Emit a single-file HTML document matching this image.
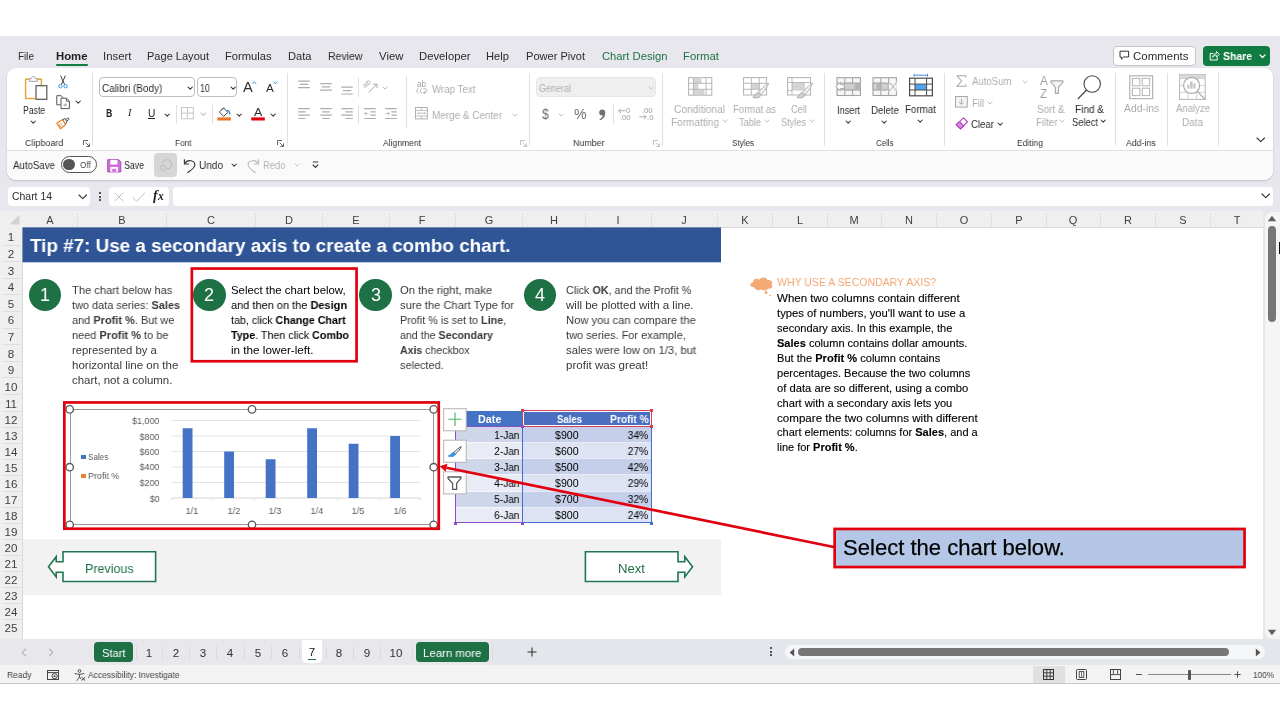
<!DOCTYPE html><html><head><meta charset="utf-8"><title>Excel</title><style>
html,body{margin:0;padding:0;}
body{width:1280px;height:720px;overflow:hidden;background:#fff;position:relative;font-family:"Liberation Sans",sans-serif;}
.a{position:absolute;}
.t{white-space:nowrap;line-height:1;will-change:transform;}
svg{overflow:visible;}
</style></head><body>
<div class="a" style="left:0px;top:36px;width:1280px;height:648px;background:#e7e7ed;"></div>
<div class="a" style="left:7px;top:68px;width:1266px;height:112px;background:#fff;border-radius:9px;box-shadow:0 1px 2px rgba(0,0,0,.18);"></div>
<div class="a" style="left:7px;top:150px;width:1266px;height:30px;background:#fafafa;border-radius:0 0 9px 9px;border-top:1px solid #e1e1e1;box-sizing:border-box;"></div>
<div class="a t" style="transform:scaleX(0.9110);top:51.00px;font-size:10.9px;color:#2b2b2b;left:18.00px;transform-origin:0 50%;">File</div>
<div class="a t" style="transform:scaleX(1.0408);top:51.00px;font-size:10.9px;color:#1f1f1f;font-weight:bold;left:56.00px;transform-origin:0 50%;">Home</div>
<div class="a t" style="transform:scaleX(1.0459);top:51.00px;font-size:10.9px;color:#2b2b2b;left:102.50px;transform-origin:0 50%;">Insert</div>
<div class="a t" style="transform:scaleX(1.0135);top:51.00px;font-size:10.9px;color:#2b2b2b;left:147.00px;transform-origin:0 50%;">Page Layout</div>
<div class="a t" style="transform:scaleX(1.0244);top:51.00px;font-size:10.9px;color:#2b2b2b;left:225.00px;transform-origin:0 50%;">Formulas</div>
<div class="a t" style="transform:scaleX(1.0210);top:51.00px;font-size:10.9px;color:#2b2b2b;left:287.50px;transform-origin:0 50%;">Data</div>
<div class="a t" style="transform:scaleX(0.9659);top:51.00px;font-size:10.9px;color:#2b2b2b;left:327.50px;transform-origin:0 50%;">Review</div>
<div class="a t" style="transform:scaleX(1.0460);top:51.00px;font-size:10.9px;color:#2b2b2b;left:378.50px;transform-origin:0 50%;">View</div>
<div class="a t" style="transform:scaleX(1.0371);top:51.00px;font-size:10.9px;color:#2b2b2b;left:418.50px;transform-origin:0 50%;">Developer</div>
<div class="a t" style="transform:scaleX(1.0265);top:51.00px;font-size:10.9px;color:#2b2b2b;left:486.00px;transform-origin:0 50%;">Help</div>
<div class="a t" style="transform:scaleX(1.0153);top:51.00px;font-size:10.9px;color:#2b2b2b;left:526.00px;transform-origin:0 50%;">Power Pivot</div>
<div class="a t" style="transform:scaleX(1.0305);top:51.00px;font-size:10.9px;color:#1e7145;left:601.50px;transform-origin:0 50%;">Chart Design</div>
<div class="a t" style="transform:scaleX(1.0435);top:51.00px;font-size:10.9px;color:#1e7145;left:682.50px;transform-origin:0 50%;">Format</div>
<div class="a" style="left:56px;top:64px;width:32px;height:2px;background:#107c41;border-radius:1px;"></div>
<div class="a" style="left:1112.5px;top:45.5px;width:83px;height:20px;background:#fff;border:1px solid #c4c4c4;box-sizing:border-box;border-radius:4px;"></div>
<svg class="a" style="left:1119px;top:50px;" width="11" height="11" viewBox="0 0 11 11"><path d="M1 1.2 H9.6 V7 H4.6 L2.4 9.2 V7 H1 Z" fill="none" stroke="#333" stroke-width="1" stroke-linejoin="round"/></svg>
<div class="a t" style="transform:scaleX(1.0540);top:51.00px;font-size:10.9px;color:#2b2b2b;left:1132.50px;transform-origin:0 50%;">Comments</div>
<div class="a" style="left:1202.5px;top:45.5px;width:67.5px;height:20px;background:#107c41;border-radius:4px;"></div>
<svg class="a" style="left:1208.5px;top:49.5px;" width="11" height="11" viewBox="0 0 11 11"><path d="M4.3 3.4 H1.2 V10 H8.3 V7.6" fill="none" stroke="#fff" stroke-width="1"/><path d="M3.6 7.4 C4 4.8 5.6 3.6 7.4 3.6 V1.4 L10.4 4.4 L7.4 7.2 V5.3 C5.8 5.3 4.6 5.9 3.6 7.4 Z" fill="none" stroke="#fff" stroke-width="0.9" stroke-linejoin="round"/></svg>
<div class="a t" style="transform:scaleX(0.9577);top:51.00px;font-size:10.9px;color:#fff;font-weight:bold;left:1222.50px;transform-origin:0 50%;">Share</div>
<svg class="a" style="left:1259.0px;top:53.75px;" width="7" height="4.5" viewBox="0 0 7 4.5"><path d="M1 1 L3.5 3.5 L6 1" fill="none" stroke="#fff" stroke-width="1.2" stroke-linecap="round" stroke-linejoin="round"/></svg>
<div class="a" style="left:7.5px;top:187px;width:82.5px;height:18.5px;background:#fff;border-radius:4px;"></div>
<div class="a t" style="transform:scaleX(1.0035);top:192.00px;font-size:10.4px;color:#2b2b2b;left:12.00px;transform-origin:0 50%;">Chart 14</div>
<svg class="a" style="left:78.25px;top:193.89999999999998px;" width="9.5" height="5.6" viewBox="0 0 9.5 5.6"><path d="M1 1 L4.75 4.6 L8.5 1" fill="none" stroke="#333" stroke-width="1.1" stroke-linecap="round" stroke-linejoin="round"/></svg>
<div class="a" style="left:98.6px;top:192.4px;width:2.1px;height:2.1px;background:#222;border-radius:1.1px;"></div>
<div class="a" style="left:98.6px;top:195.6px;width:2.1px;height:2.1px;background:#222;border-radius:1.1px;"></div>
<div class="a" style="left:98.6px;top:198.8px;width:2.1px;height:2.1px;background:#222;border-radius:1.1px;"></div>
<div class="a" style="left:108.5px;top:187px;width:60.5px;height:18.5px;background:#fff;border-radius:4px;"></div>
<svg class="a" style="left:113.5px;top:191.5px;" width="10" height="10" viewBox="0 0 10 10"><path d="M0.8 0.8 L9.2 9.2 M9.2 0.8 L0.8 9.2" stroke="#c2c2c2" stroke-width="1" fill="none"/></svg>
<svg class="a" style="left:132px;top:191.5px;" width="14" height="10" viewBox="0 0 14 10"><path d="M0.8 5.5 L4.6 9.2 L13 0.8" stroke="#c2c2c2" stroke-width="1" fill="none"/></svg>
<div class="a t" style="top:188.88px;font-size:14px;color:#222;font-weight:bold;font-style:italic;font-family:'Liberation Serif',serif;left:152.50px;transform-origin:0 50%;">f</div>
<div class="a t" style="top:191.17px;font-size:11.5px;color:#222;font-weight:bold;font-style:italic;font-family:'Liberation Serif',serif;left:158.30px;transform-origin:0 50%;">x</div>
<div class="a" style="left:173px;top:187px;width:1099.5px;height:18.5px;background:#fff;border-radius:4px;"></div>
<svg class="a" style="left:1260.75px;top:192.7px;" width="9.5" height="5.6" viewBox="0 0 9.5 5.6"><path d="M1 1 L4.75 4.6 L8.5 1" fill="none" stroke="#333" stroke-width="1.1" stroke-linecap="round" stroke-linejoin="round"/></svg>
<div class="a" style="left:0px;top:211px;width:1264px;height:428px;background:#fff;"></div>
<div class="a" style="left:0px;top:211px;width:1263.4px;height:16.5px;background:#efefef;"></div>
<div class="a" style="left:0px;top:211px;width:22.5px;height:428px;background:#efefef;"></div>
<svg class="a" style="left:9px;top:214px;" width="11" height="11" viewBox="0 0 11 11"><path d="M10.5 0.5 V10.5 H0.5 Z" fill="#d2d2d2"/></svg>
<div class="a t" style="transform:translateX(-50%);top:214.69px;font-size:11px;color:#404040;left:49.75px;transform-origin:50% 50%;">A</div>
<div class="a" style="left:76.5px;top:213px;width:1px;height:14px;background:#e0e0e0;"></div>
<div class="a t" style="transform:translateX(-50%);top:214.69px;font-size:11px;color:#404040;left:121.50px;transform-origin:50% 50%;">B</div>
<div class="a" style="left:165.5px;top:213px;width:1px;height:14px;background:#e0e0e0;"></div>
<div class="a t" style="transform:translateX(-50%);top:214.69px;font-size:11px;color:#404040;left:210.50px;transform-origin:50% 50%;">C</div>
<div class="a" style="left:254.5px;top:213px;width:1px;height:14px;background:#e0e0e0;"></div>
<div class="a t" style="transform:translateX(-50%);top:214.69px;font-size:11px;color:#404040;left:288.50px;transform-origin:50% 50%;">D</div>
<div class="a" style="left:321.5px;top:213px;width:1px;height:14px;background:#e0e0e0;"></div>
<div class="a t" style="transform:translateX(-50%);top:214.69px;font-size:11px;color:#404040;left:355.50px;transform-origin:50% 50%;">E</div>
<div class="a" style="left:388.5px;top:213px;width:1px;height:14px;background:#e0e0e0;"></div>
<div class="a t" style="transform:translateX(-50%);top:214.69px;font-size:11px;color:#404040;left:422.00px;transform-origin:50% 50%;">F</div>
<div class="a" style="left:454.5px;top:213px;width:1px;height:14px;background:#e0e0e0;"></div>
<div class="a t" style="transform:translateX(-50%);top:214.69px;font-size:11px;color:#404040;left:488.50px;transform-origin:50% 50%;">G</div>
<div class="a" style="left:521.5px;top:213px;width:1px;height:14px;background:#e0e0e0;"></div>
<div class="a t" style="transform:translateX(-50%);top:214.69px;font-size:11px;color:#404040;left:553.50px;transform-origin:50% 50%;">H</div>
<div class="a" style="left:584.5px;top:213px;width:1px;height:14px;background:#e0e0e0;"></div>
<div class="a t" style="transform:translateX(-50%);top:214.69px;font-size:11px;color:#404040;left:618.00px;transform-origin:50% 50%;">I</div>
<div class="a" style="left:650.5px;top:213px;width:1px;height:14px;background:#e0e0e0;"></div>
<div class="a t" style="transform:translateX(-50%);top:214.69px;font-size:11px;color:#404040;left:684.00px;transform-origin:50% 50%;">J</div>
<div class="a" style="left:716.5px;top:213px;width:1px;height:14px;background:#e0e0e0;"></div>
<div class="a t" style="transform:translateX(-50%);top:214.69px;font-size:11px;color:#404040;left:744.50px;transform-origin:50% 50%;">K</div>
<div class="a" style="left:771.5px;top:213px;width:1px;height:14px;background:#e0e0e0;"></div>
<div class="a t" style="transform:translateX(-50%);top:214.69px;font-size:11px;color:#404040;left:799.50px;transform-origin:50% 50%;">L</div>
<div class="a" style="left:826.5px;top:213px;width:1px;height:14px;background:#e0e0e0;"></div>
<div class="a t" style="transform:translateX(-50%);top:214.69px;font-size:11px;color:#404040;left:854.00px;transform-origin:50% 50%;">M</div>
<div class="a" style="left:880.5px;top:213px;width:1px;height:14px;background:#e0e0e0;"></div>
<div class="a t" style="transform:translateX(-50%);top:214.69px;font-size:11px;color:#404040;left:908.50px;transform-origin:50% 50%;">N</div>
<div class="a" style="left:935.5px;top:213px;width:1px;height:14px;background:#e0e0e0;"></div>
<div class="a t" style="transform:translateX(-50%);top:214.69px;font-size:11px;color:#404040;left:963.50px;transform-origin:50% 50%;">O</div>
<div class="a" style="left:990.5px;top:213px;width:1px;height:14px;background:#e0e0e0;"></div>
<div class="a t" style="transform:translateX(-50%);top:214.69px;font-size:11px;color:#404040;left:1018.50px;transform-origin:50% 50%;">P</div>
<div class="a" style="left:1045.5px;top:213px;width:1px;height:14px;background:#e0e0e0;"></div>
<div class="a t" style="transform:translateX(-50%);top:214.69px;font-size:11px;color:#404040;left:1073.00px;transform-origin:50% 50%;">Q</div>
<div class="a" style="left:1099.5px;top:213px;width:1px;height:14px;background:#e0e0e0;"></div>
<div class="a t" style="transform:translateX(-50%);top:214.69px;font-size:11px;color:#404040;left:1127.50px;transform-origin:50% 50%;">R</div>
<div class="a" style="left:1154.5px;top:213px;width:1px;height:14px;background:#e0e0e0;"></div>
<div class="a t" style="transform:translateX(-50%);top:214.69px;font-size:11px;color:#404040;left:1182.50px;transform-origin:50% 50%;">S</div>
<div class="a" style="left:1209.5px;top:213px;width:1px;height:14px;background:#e0e0e0;"></div>
<div class="a t" style="transform:translateX(-50%);top:214.69px;font-size:11px;color:#404040;left:1236.50px;transform-origin:50% 50%;">T</div>
<div class="a" style="left:1262.5px;top:213px;width:1px;height:14px;background:#e0e0e0;"></div>
<div class="a" style="left:22px;top:227px;width:1242px;height:0.8px;background:#d9d9d9;"></div>
<div class="a t" style="transform:translateX(-50%);top:231.00px;font-size:11.6px;color:#404040;left:11.20px;transform-origin:50% 50%;">1</div>
<div class="a t" style="transform:translateX(-50%);top:248.00px;font-size:11.6px;color:#404040;left:11.20px;transform-origin:50% 50%;">2</div>
<div class="a t" style="transform:translateX(-50%);top:265.00px;font-size:11.6px;color:#404040;left:11.20px;transform-origin:50% 50%;">3</div>
<div class="a t" style="transform:translateX(-50%);top:281.00px;font-size:11.6px;color:#404040;left:11.20px;transform-origin:50% 50%;">4</div>
<div class="a t" style="transform:translateX(-50%);top:298.00px;font-size:11.6px;color:#404040;left:11.20px;transform-origin:50% 50%;">5</div>
<div class="a t" style="transform:translateX(-50%);top:314.00px;font-size:11.6px;color:#404040;left:11.20px;transform-origin:50% 50%;">6</div>
<div class="a t" style="transform:translateX(-50%);top:331.00px;font-size:11.6px;color:#404040;left:11.20px;transform-origin:50% 50%;">7</div>
<div class="a t" style="transform:translateX(-50%);top:348.00px;font-size:11.6px;color:#404040;left:11.20px;transform-origin:50% 50%;">8</div>
<div class="a t" style="transform:translateX(-50%);top:364.00px;font-size:11.6px;color:#404040;left:11.20px;transform-origin:50% 50%;">9</div>
<div class="a t" style="transform:translateX(-50%);top:381.00px;font-size:11.6px;color:#404040;left:11.20px;transform-origin:50% 50%;">10</div>
<div class="a t" style="transform:translateX(-50%);top:398.00px;font-size:11.6px;color:#404040;left:11.20px;transform-origin:50% 50%;">11</div>
<div class="a t" style="transform:translateX(-50%);top:414.00px;font-size:11.6px;color:#404040;left:11.20px;transform-origin:50% 50%;">12</div>
<div class="a t" style="transform:translateX(-50%);top:430.00px;font-size:11.6px;color:#404040;left:11.20px;transform-origin:50% 50%;">13</div>
<div class="a t" style="transform:translateX(-50%);top:446.00px;font-size:11.6px;color:#404040;left:11.20px;transform-origin:50% 50%;">14</div>
<div class="a t" style="transform:translateX(-50%);top:462.00px;font-size:11.6px;color:#404040;left:11.20px;transform-origin:50% 50%;">15</div>
<div class="a t" style="transform:translateX(-50%);top:478.00px;font-size:11.6px;color:#404040;left:11.20px;transform-origin:50% 50%;">16</div>
<div class="a t" style="transform:translateX(-50%);top:494.00px;font-size:11.6px;color:#404040;left:11.20px;transform-origin:50% 50%;">17</div>
<div class="a t" style="transform:translateX(-50%);top:510.00px;font-size:11.6px;color:#404040;left:11.20px;transform-origin:50% 50%;">18</div>
<div class="a t" style="transform:translateX(-50%);top:526.00px;font-size:11.6px;color:#404040;left:11.20px;transform-origin:50% 50%;">19</div>
<div class="a t" style="transform:translateX(-50%);top:542.00px;font-size:11.6px;color:#404040;left:11.20px;transform-origin:50% 50%;">20</div>
<div class="a t" style="transform:translateX(-50%);top:558.00px;font-size:11.6px;color:#404040;left:11.20px;transform-origin:50% 50%;">21</div>
<div class="a t" style="transform:translateX(-50%);top:574.00px;font-size:11.6px;color:#404040;left:11.20px;transform-origin:50% 50%;">22</div>
<div class="a t" style="transform:translateX(-50%);top:590.00px;font-size:11.6px;color:#404040;left:11.20px;transform-origin:50% 50%;">23</div>
<div class="a t" style="transform:translateX(-50%);top:606.00px;font-size:11.6px;color:#404040;left:11.20px;transform-origin:50% 50%;">24</div>
<div class="a t" style="transform:translateX(-50%);top:622.00px;font-size:11.6px;color:#404040;left:11.20px;transform-origin:50% 50%;">25</div>
<div class="a" style="left:2px;top:244.65px;width:19px;height:0.8px;background:#dedede;"></div>
<div class="a" style="left:2px;top:261.25px;width:19px;height:0.8px;background:#dedede;"></div>
<div class="a" style="left:2px;top:277.85px;width:19px;height:0.8px;background:#dedede;"></div>
<div class="a" style="left:2px;top:294.45000000000005px;width:19px;height:0.8px;background:#dedede;"></div>
<div class="a" style="left:2px;top:311.05px;width:19px;height:0.8px;background:#dedede;"></div>
<div class="a" style="left:2px;top:327.65000000000003px;width:19px;height:0.8px;background:#dedede;"></div>
<div class="a" style="left:2px;top:344.25000000000006px;width:19px;height:0.8px;background:#dedede;"></div>
<div class="a" style="left:2px;top:360.85px;width:19px;height:0.8px;background:#dedede;"></div>
<div class="a" style="left:2px;top:377.45000000000005px;width:19px;height:0.8px;background:#dedede;"></div>
<div class="a" style="left:2px;top:394.40000000000003px;width:19px;height:0.8px;background:#dedede;"></div>
<div class="a" style="left:2px;top:410.9px;width:19px;height:0.8px;background:#dedede;"></div>
<div class="a" style="left:2px;top:427.0px;width:19px;height:0.8px;background:#dedede;"></div>
<div class="a" style="left:2px;top:443.0px;width:19px;height:0.8px;background:#dedede;"></div>
<div class="a" style="left:2px;top:458.9px;width:19px;height:0.8px;background:#dedede;"></div>
<div class="a" style="left:2px;top:474.75px;width:19px;height:0.8px;background:#dedede;"></div>
<div class="a" style="left:2px;top:490.70000000000005px;width:19px;height:0.8px;background:#dedede;"></div>
<div class="a" style="left:2px;top:506.70000000000005px;width:19px;height:0.8px;background:#dedede;"></div>
<div class="a" style="left:2px;top:522.7px;width:19px;height:0.8px;background:#dedede;"></div>
<div class="a" style="left:2px;top:538.7500000000001px;width:19px;height:0.8px;background:#dedede;"></div>
<div class="a" style="left:2px;top:554.8000000000001px;width:19px;height:0.8px;background:#dedede;"></div>
<div class="a" style="left:2px;top:570.8000000000001px;width:19px;height:0.8px;background:#dedede;"></div>
<div class="a" style="left:2px;top:586.85px;width:19px;height:0.8px;background:#dedede;"></div>
<div class="a" style="left:2px;top:602.85px;width:19px;height:0.8px;background:#dedede;"></div>
<div class="a" style="left:2px;top:618.8000000000001px;width:19px;height:0.8px;background:#dedede;"></div>
<div class="a" style="left:22px;top:227px;width:0.8px;height:412px;background:#d9d9d9;"></div>
<svg class="a" style="left:22px;top:227px;" width="700" height="36" viewBox="0 0 700 36"><rect x="0.5" y="0.4" width="698.5" height="34.9" fill="#2f5597"/></svg>
<div class="a t" style="transform:scaleX(0.9823);top:236.00px;font-size:19.2px;color:#fff;font-weight:bold;left:30.00px;transform-origin:0 50%;">Tip #7: Use a secondary axis to create a combo chart.</div>
<div class="a" style="left:22.5px;top:538.5px;width:698.5px;height:56.5px;background:#f2f2f2;"></div>
<div class="a" style="left:1263.4px;top:211px;width:17px;height:428.5px;background:#e7e7ed;"></div>
<div class="a" style="left:1263.6px;top:212px;width:16.6px;height:427.4px;background:#f5f5f6;border-radius:8px 0 0 8px / 8px 0 0 8px;border-left:1px solid #e6e6e8;box-sizing:border-box;"></div>
<svg class="a" style="left:1267px;top:215px;" width="10" height="7" viewBox="0 0 10 7"><path d="M5 0.8 L9.2 6.2 H0.8 Z" fill="#606060"/></svg>
<svg class="a" style="left:1267px;top:629px;" width="10" height="7" viewBox="0 0 10 7"><path d="M5 6.2 L9.2 0.8 H0.8 Z" fill="#606060"/></svg>
<div class="a" style="left:1268px;top:226px;width:7.5px;height:95.5px;background:#767676;border-radius:4px;"></div>
<div class="a" style="left:1278.6px;top:241.5px;width:1.4px;height:12px;background:#111;"></div>
<div class="a" style="left:0px;top:638.7px;width:1280px;height:26px;background:#e3e7eb;"></div>
<div class="a" style="left:0px;top:638.7px;width:492px;height:26px;background:#e7e7ec;"></div>
<svg class="a" style="left:20.5px;top:647.5px;" width="6" height="9" viewBox="0 0 6 9"><path d="M5 0.8 L1 4.5 L5 8.2" fill="none" stroke="#9a9a9a" stroke-width="1"/></svg>
<svg class="a" style="left:47.5px;top:647.5px;" width="6" height="9" viewBox="0 0 6 9"><path d="M1 0.8 L5 4.5 L1 8.2" fill="none" stroke="#9a9a9a" stroke-width="1"/></svg>
<div class="a" style="left:94px;top:642px;width:39px;height:20px;background:#1e7145;border-radius:4px;"></div>
<div class="a t" style="transform:scaleX(0.9598);top:647.00px;font-size:11.6px;color:#fff;left:101.50px;transform-origin:0 50%;">Start</div>
<div class="a" style="left:302px;top:640px;width:19.5px;height:23px;background:#fff;border-radius:0 0 5px 5px;"></div>
<div class="a t" style="transform:translateX(-50%);top:646.00px;font-size:11.6px;color:#111;left:311.50px;transform-origin:50% 50%;">7</div>
<div class="a" style="left:308px;top:658.6px;width:7.5px;height:1.4px;background:#1e7145;"></div>
<div class="a t" style="transform:translateX(-50%);top:647.00px;font-size:11.6px;color:#333;left:149.00px;transform-origin:50% 50%;">1</div>
<div class="a t" style="transform:translateX(-50%);top:647.00px;font-size:11.6px;color:#333;left:175.50px;transform-origin:50% 50%;">2</div>
<div class="a t" style="transform:translateX(-50%);top:647.00px;font-size:11.6px;color:#333;left:203.00px;transform-origin:50% 50%;">3</div>
<div class="a t" style="transform:translateX(-50%);top:647.00px;font-size:11.6px;color:#333;left:230.00px;transform-origin:50% 50%;">4</div>
<div class="a t" style="transform:translateX(-50%);top:647.00px;font-size:11.6px;color:#333;left:257.50px;transform-origin:50% 50%;">5</div>
<div class="a t" style="transform:translateX(-50%);top:647.00px;font-size:11.6px;color:#333;left:285.00px;transform-origin:50% 50%;">6</div>
<div class="a t" style="transform:translateX(-50%);top:647.00px;font-size:11.6px;color:#333;left:339.00px;transform-origin:50% 50%;">8</div>
<div class="a t" style="transform:translateX(-50%);top:647.00px;font-size:11.6px;color:#333;left:366.50px;transform-origin:50% 50%;">9</div>
<div class="a t" style="transform:translateX(-50%);top:647.00px;font-size:11.6px;color:#333;left:395.50px;transform-origin:50% 50%;">10</div>
<div class="a" style="left:136.3px;top:645.5px;width:0.8px;height:13px;background:#d9d9df;"></div>
<div class="a" style="left:162px;top:645.5px;width:0.8px;height:13px;background:#d9d9df;"></div>
<div class="a" style="left:188.8px;top:645.5px;width:0.8px;height:13px;background:#d9d9df;"></div>
<div class="a" style="left:216.3px;top:645.5px;width:0.8px;height:13px;background:#d9d9df;"></div>
<div class="a" style="left:243.6px;top:645.5px;width:0.8px;height:13px;background:#d9d9df;"></div>
<div class="a" style="left:271px;top:645.5px;width:0.8px;height:13px;background:#d9d9df;"></div>
<div class="a" style="left:298.5px;top:645.5px;width:0.8px;height:13px;background:#d9d9df;"></div>
<div class="a" style="left:325.5px;top:645.5px;width:0.8px;height:13px;background:#d9d9df;"></div>
<div class="a" style="left:352.5px;top:645.5px;width:0.8px;height:13px;background:#d9d9df;"></div>
<div class="a" style="left:380px;top:645.5px;width:0.8px;height:13px;background:#d9d9df;"></div>
<div class="a" style="left:411.5px;top:645.5px;width:0.8px;height:13px;background:#d9d9df;"></div>
<div class="a" style="left:491.5px;top:645.5px;width:0.8px;height:13px;background:#d9d9df;"></div>
<div class="a" style="left:415.5px;top:642px;width:73px;height:20px;background:#1e7145;border-radius:4px;"></div>
<div class="a t" style="transform:scaleX(0.9866);top:647.00px;font-size:11.6px;color:#fff;left:422.50px;transform-origin:0 50%;">Learn more</div>
<svg class="a" style="left:527px;top:646.5px;" width="10" height="10" viewBox="0 0 10 10"><path d="M5 0.5 V9.5 M0.5 5 H9.5" stroke="#333" stroke-width="1.1" fill="none"/></svg>
<div class="a" style="left:769.5px;top:647.2px;width:2.1px;height:2.1px;background:#222;border-radius:1.1px;"></div>
<div class="a" style="left:769.5px;top:650.5px;width:2.1px;height:2.1px;background:#222;border-radius:1.1px;"></div>
<div class="a" style="left:769.5px;top:653.8px;width:2.1px;height:2.1px;background:#222;border-radius:1.1px;"></div>
<div class="a" style="left:785px;top:644.5px;width:480px;height:14.5px;background:#f5f6f8;border-radius:7px;"></div>
<svg class="a" style="left:788.5px;top:647.5px;" width="6" height="9" viewBox="0 0 6 9"><path d="M5.2 0.5 V8.5 L0.6 4.5 Z" fill="#555"/></svg>
<svg class="a" style="left:1255px;top:647.5px;" width="6" height="9" viewBox="0 0 6 9"><path d="M0.8 0.5 V8.5 L5.4 4.5 Z" fill="#555"/></svg>
<div class="a" style="left:798px;top:648px;width:431px;height:7.5px;background:#767676;border-radius:4px;"></div>
<div class="a" style="left:0px;top:664.6px;width:1280px;height:19px;background:#f3f3f3;"></div>
<div class="a" style="left:0px;top:683px;width:1280px;height:1px;background:#c8c8c8;"></div>
<div class="a t" style="transform:scaleX(0.8919);top:670.00px;font-size:9.5px;color:#444;left:6.50px;transform-origin:0 50%;">Ready</div>
<svg class="a" style="left:46.5px;top:669.5px;" width="12" height="10" viewBox="0 0 12 10"><rect x="0.5" y="0.5" width="11" height="9" fill="none" stroke="#444" stroke-width="1"/><path d="M0.5 2.6 H11.5" stroke="#444" stroke-width="1"/><circle cx="7.6" cy="6.2" r="2.6" fill="#f3f3f3" stroke="#444" stroke-width="1"/><circle cx="7.6" cy="6.2" r="1" fill="#444"/></svg>
<svg class="a" style="left:73.5px;top:668.5px;" width="12" height="12" viewBox="0 0 12 12"><circle cx="5.5" cy="2" r="1.4" fill="none" stroke="#444" stroke-width="0.9"/><path d="M1 4.6 L5.5 5.4 L10 4.6 M5.5 5.4 V8 L3 11.4 M5.5 8 L7 10" fill="none" stroke="#444" stroke-width="0.9" stroke-linecap="round"/><path d="M7.6 8.2 L11.2 11.6 M11.2 8.2 L7.6 11.6" stroke="#444" stroke-width="1"/></svg>
<div class="a t" style="transform:scaleX(0.9005);top:670.00px;font-size:9.4px;color:#444;left:88.00px;transform-origin:0 50%;">Accessibility: Investigate</div>
<div class="a" style="left:1032.5px;top:666px;width:32.5px;height:17px;background:#e0e0e0;"></div>
<svg class="a" style="left:1042.5px;top:668.5px;" width="11" height="11" viewBox="0 0 11 11"><rect x="0.5" y="0.5" width="10" height="10" fill="none" stroke="#333" stroke-width="1"/><path d="M0.5 3.8 H10.5 M0.5 7.2 H10.5 M3.8 0.5 V10.5 M7.2 0.5 V10.5" stroke="#333" stroke-width="0.9"/></svg>
<svg class="a" style="left:1076px;top:668.5px;" width="11" height="11" viewBox="0 0 11 11"><rect x="0.5" y="0.5" width="10" height="10" rx="1" fill="none" stroke="#444" stroke-width="1"/><rect x="3.2" y="2.6" width="4.6" height="5.8" fill="none" stroke="#444" stroke-width="0.9"/><path d="M5.5 2.6 V8.4" stroke="#444" stroke-width="0.7"/></svg>
<svg class="a" style="left:1109.5px;top:668.5px;" width="11" height="11" viewBox="0 0 11 11"><rect x="0.5" y="0.5" width="10" height="10" fill="none" stroke="#444" stroke-width="1"/><path d="M3.4 0.5 V5.6 H7.6 V0.5 M0.5 5.6 H3.4 M7.6 5.6 H10.5" stroke="#444" stroke-width="0.9" fill="none"/></svg>
<div class="a" style="left:1136px;top:674.3px;width:6px;height:1px;background:#555;"></div>
<div class="a" style="left:1147.5px;top:674.4px;width:83.5px;height:0.9px;background:#8a8a8a;"></div>
<div class="a" style="left:1187.5px;top:670px;width:3px;height:10px;background:#555;border-radius:1px;"></div>
<svg class="a" style="left:1234px;top:671px;" width="7" height="7" viewBox="0 0 7 7"><path d="M3.5 0.3 V6.7 M0.3 3.5 H6.7" stroke="#555" stroke-width="1" fill="none"/></svg>
<div class="a t" style="transform:scaleX(0.8756);top:670.00px;font-size:9.4px;color:#444;left:1252.50px;transform-origin:0 50%;">100%</div>
<div class="a" style="left:92.0px;top:72.5px;width:1px;height:73px;background:#e0e0e0;"></div>
<div class="a" style="left:286.5px;top:72.5px;width:1px;height:73px;background:#e0e0e0;"></div>
<div class="a" style="left:528.5px;top:72.5px;width:1px;height:73px;background:#e0e0e0;"></div>
<div class="a" style="left:662.0px;top:72.5px;width:1px;height:73px;background:#e0e0e0;"></div>
<div class="a" style="left:824.0px;top:72.5px;width:1px;height:73px;background:#e0e0e0;"></div>
<div class="a" style="left:944.0px;top:72.5px;width:1px;height:73px;background:#e0e0e0;"></div>
<div class="a" style="left:1115.0px;top:72.5px;width:1px;height:73px;background:#e0e0e0;"></div>
<div class="a" style="left:1166.8px;top:72.5px;width:1px;height:73px;background:#e0e0e0;"></div>
<div class="a" style="left:1217.9px;top:72.5px;width:1px;height:73px;background:#e0e0e0;"></div>
<div class="a t" style="transform:scaleX(0.9248);top:138.00px;font-size:9.7px;color:#333;left:24.75px;transform-origin:0 50%;">Clipboard</div>
<div class="a t" style="transform:scaleX(0.8509);top:138.00px;font-size:9.7px;color:#333;left:174.75px;transform-origin:0 50%;">Font</div>
<div class="a t" style="transform:scaleX(0.8818);top:138.00px;font-size:9.7px;color:#333;left:382.50px;transform-origin:0 50%;">Alignment</div>
<div class="a t" style="transform:scaleX(0.9139);top:138.00px;font-size:9.7px;color:#333;left:573.00px;transform-origin:0 50%;">Number</div>
<div class="a t" style="transform:scaleX(0.8336);top:138.00px;font-size:9.7px;color:#333;left:732.00px;transform-origin:0 50%;">Styles</div>
<div class="a t" style="transform:scaleX(0.8122);top:138.00px;font-size:9.7px;color:#333;left:875.50px;transform-origin:0 50%;">Cells</div>
<div class="a t" style="transform:scaleX(0.8776);top:138.00px;font-size:9.7px;color:#333;left:1017.00px;transform-origin:0 50%;">Editing</div>
<div class="a t" style="transform:scaleX(0.9039);top:138.00px;font-size:9.7px;color:#333;left:1126.00px;transform-origin:0 50%;">Add-ins</div>
<svg class="a" style="left:82.5px;top:139.5px;" width="7" height="7" viewBox="0 0 7 7"><path d="M0.5 5 V0.5 H5" fill="none" stroke="#555" stroke-width="0.9"/><path d="M2.6 2.6 L6.3 6.3 M6.5 3.4 V6.5 H3.4" fill="none" stroke="#555" stroke-width="0.9"/></svg>
<svg class="a" style="left:277.2px;top:139.5px;" width="7" height="7" viewBox="0 0 7 7"><path d="M0.5 5 V0.5 H5" fill="none" stroke="#555" stroke-width="0.9"/><path d="M2.6 2.6 L6.3 6.3 M6.5 3.4 V6.5 H3.4" fill="none" stroke="#555" stroke-width="0.9"/></svg>
<svg class="a" style="left:519.5px;top:139.5px;" width="7" height="7" viewBox="0 0 7 7"><path d="M0.5 5 V0.5 H5" fill="none" stroke="#bbb" stroke-width="0.9"/><path d="M2.6 2.6 L6.3 6.3 M6.5 3.4 V6.5 H3.4" fill="none" stroke="#bbb" stroke-width="0.9"/></svg>
<svg class="a" style="left:652.5px;top:139.5px;" width="7" height="7" viewBox="0 0 7 7"><path d="M0.5 5 V0.5 H5" fill="none" stroke="#bbb" stroke-width="0.9"/><path d="M2.6 2.6 L6.3 6.3 M6.5 3.4 V6.5 H3.4" fill="none" stroke="#bbb" stroke-width="0.9"/></svg>
<svg class="a" style="left:24px;top:74.5px;" width="24" height="25.5" viewBox="0 0 24 25.5"><path d="M5.5 4.2 H1.6 V23.4 H11.4 M13 4.2 H17.4 V10" fill="none" stroke="#eaa23c" stroke-width="1.5" stroke-linejoin="round"/><path d="M5.4 6.3 V3.6 H7.6 C7.6 0.6 11.2 0.6 11.2 3.6 H13.4 V6.3 Z" fill="#fff" stroke="#9a9a9a" stroke-width="0.9" stroke-linejoin="round"/><rect x="12" y="10.7" width="10.8" height="13.6" fill="#fff" stroke="#555" stroke-width="1.2"/></svg>
<div class="a t" style="transform:scaleX(0.8315);top:106.00px;font-size:10.4px;color:#2b2b2b;left:22.90px;transform-origin:0 50%;">Paste</div>
<svg class="a" style="left:30.400000000000002px;top:120.2px;" width="6.4" height="4.2" viewBox="0 0 6.4 4.2"><path d="M1 1 L3.2 3.2 L5.4 1" fill="none" stroke="#333" stroke-width="1.05" stroke-linecap="round" stroke-linejoin="round"/></svg>
<svg class="a" style="left:58px;top:74.5px;" width="10" height="14" viewBox="0 0 10 14"><path d="M2.6 0.6 L6.6 9.6 M7.4 0.6 L3.4 9.6" fill="none" stroke="#444" stroke-width="1"/><circle cx="2.4" cy="11.2" r="1.7" fill="none" stroke="#3a96dd" stroke-width="1"/><circle cx="7.6" cy="11.2" r="1.7" fill="none" stroke="#3a96dd" stroke-width="1"/></svg>
<svg class="a" style="left:55.5px;top:95px;" width="15" height="14.5" viewBox="0 0 15 14.5"><path d="M4.6 9.8 H0.8 V0.7 H5.2 L7 2.6" fill="none" stroke="#555" stroke-width="1"/><path d="M5 3.2 H10.6 L13.4 6 V13.6 H5 Z" fill="#fff" stroke="#555" stroke-width="1" stroke-linejoin="round"/><path d="M10.4 3.4 V6.2 H13.2" fill="none" stroke="#555" stroke-width="0.9"/><rect x="7.6" y="8.6" width="3.2" height="2.6" fill="#bdbdbd"/></svg>
<svg class="a" style="left:75.3px;top:100.2px;" width="6.4" height="4.2" viewBox="0 0 6.4 4.2"><path d="M1 1 L3.2 3.2 L5.4 1" fill="none" stroke="#333" stroke-width="1.05" stroke-linecap="round" stroke-linejoin="round"/></svg>
<svg class="a" style="left:56px;top:116.5px;" width="14" height="13" viewBox="0 0 14 13"><path d="M0.8 6 L6.6 2.6 L9.6 7.6 L4.6 11.8 Z" fill="none" stroke="#e8822a" stroke-width="1.2" stroke-linejoin="round"/><path d="M2.6 7.2 L5.2 10.6 M4.2 5.8 L7 9.6" stroke="#e8822a" stroke-width="0.8"/><path d="M6.6 2.8 L9 1.4 L11 4.6 L9.4 7.2" fill="none" stroke="#555" stroke-width="1"/><path d="M9.8 2.6 L12.2 0.8 L13.2 2.2 L10.8 4" fill="none" stroke="#555" stroke-width="0.9"/></svg>
<div class="a" style="left:99.4px;top:77.4px;width:95.2px;height:20px;background:#fff;border:1px solid #bdbdbd;box-sizing:border-box;border-radius:4px;"></div>
<div class="a t" style="transform:scaleX(0.9581);top:84.00px;font-size:10.4px;color:#2b2b2b;left:101.60px;transform-origin:0 50%;">Calibri (Body)</div>
<svg class="a" style="left:187.3px;top:85.7px;" width="6.4" height="4.2" viewBox="0 0 6.4 4.2"><path d="M1 1 L3.2 3.2 L5.4 1" fill="none" stroke="#222" stroke-width="1.05" stroke-linecap="round" stroke-linejoin="round"/></svg>
<div class="a" style="left:197.3px;top:77.4px;width:40.2px;height:20px;background:#fff;border:1px solid #bdbdbd;box-sizing:border-box;border-radius:4px;"></div>
<div class="a t" style="transform:scaleX(0.8476);top:84.00px;font-size:10.4px;color:#2b2b2b;left:199.60px;transform-origin:0 50%;">10</div>
<svg class="a" style="left:229.70000000000002px;top:85.7px;" width="6.4" height="4.2" viewBox="0 0 6.4 4.2"><path d="M1 1 L3.2 3.2 L5.4 1" fill="none" stroke="#222" stroke-width="1.05" stroke-linecap="round" stroke-linejoin="round"/></svg>
<div class="a t" style="transform:scaleX(1.0067);top:80.00px;font-size:14.6px;color:#2b2b2b;left:243.40px;transform-origin:0 50%;">A</div>
<svg class="a" style="left:252px;top:80.6px;" width="5" height="3.5" viewBox="0 0 5 3.5"><path d="M0.5 3 L2.3 0.7 L4.2 3" fill="none" stroke="#3a96dd" stroke-width="0.9"/></svg>
<div class="a t" style="transform:scaleX(1.0085);top:82.00px;font-size:11.6px;color:#2b2b2b;left:266.20px;transform-origin:0 50%;">A</div>
<svg class="a" style="left:272.8px;top:80.8px;" width="5" height="3.5" viewBox="0 0 5 3.5"><path d="M0.5 0.6 L2.3 2.9 L4.2 0.6" fill="none" stroke="#3a96dd" stroke-width="0.9"/></svg>
<div class="a t" style="transform:scaleX(0.8249);top:109.00px;font-size:10.4px;color:#222;font-weight:bold;left:106.40px;transform-origin:0 50%;">B</div>
<div class="a t" style="top:107.89px;font-size:10.4px;color:#222;font-style:italic;font-family:'Liberation Serif',serif;left:128.20px;transform-origin:0 50%;">I</div>
<div class="a t" style="transform:scaleX(0.9512);top:109.00px;font-size:10.2px;color:#222;left:148.00px;transform-origin:0 50%;">U</div>
<div class="a" style="left:148px;top:118.2px;width:7.2px;height:0.9px;background:#222;"></div>
<svg class="a" style="left:164.4px;top:112.5px;" width="6.4" height="4.2" viewBox="0 0 6.4 4.2"><path d="M1 1 L3.2 3.2 L5.4 1" fill="none" stroke="#333" stroke-width="1.05" stroke-linecap="round" stroke-linejoin="round"/></svg>
<div class="a" style="left:176px;top:104.5px;width:1px;height:19px;background:#e0e0e0;"></div>
<svg class="a" style="left:181.2px;top:107.4px;" width="13" height="12.5" viewBox="0 0 13 12.5"><rect x="0.5" y="0.5" width="11.8" height="11.3" fill="none" stroke="#c6c6c6" stroke-width="1"/><path d="M6.4 0.5 V11.8 M0.5 6.1 H12.3" stroke="#c6c6c6" stroke-width="1"/></svg>
<svg class="a" style="left:200.29999999999998px;top:112.44999999999999px;" width="6.6" height="4.3" viewBox="0 0 6.6 4.3"><path d="M1 1 L3.3 3.3 L5.6 1" fill="none" stroke="#c6c6c6" stroke-width="1.1" stroke-linecap="round" stroke-linejoin="round"/></svg>
<div class="a" style="left:212px;top:104.5px;width:1px;height:19px;background:#e0e0e0;"></div>
<svg class="a" style="left:218px;top:107px;" width="13" height="10.5" viewBox="0 0 13 10.5"><path d="M5.6 0.8 L9.8 5.4 L5.6 9.4 L1.4 5 Z" fill="none" stroke="#444" stroke-width="1" stroke-linejoin="round"/><path d="M3.6 2.8 L5.6 0.8" stroke="#444" stroke-width="1"/><path d="M9 3.4 C11.4 3.6 12 5.6 11.6 7.4" fill="none" stroke="#2b7cd3" stroke-width="1.2"/></svg>
<svg class="a" style="left:217px;top:117px;" width="15" height="4" viewBox="0 0 15 4"><rect x="0.3" y="0.4" width="13.6" height="3.1" fill="#e8782a"/></svg>
<svg class="a" style="left:236.3px;top:112.5px;" width="6.4" height="4.2" viewBox="0 0 6.4 4.2"><path d="M1 1 L3.2 3.2 L5.4 1" fill="none" stroke="#333" stroke-width="1.05" stroke-linecap="round" stroke-linejoin="round"/></svg>
<div class="a t" style="transform:scaleX(1.0731);top:106.00px;font-size:11.6px;color:#333;left:254.20px;transform-origin:0 50%;">A</div>
<svg class="a" style="left:251px;top:117px;" width="15" height="4" viewBox="0 0 15 4"><rect x="0.3" y="0.4" width="13.5" height="3.1" fill="#e2000f"/></svg>
<svg class="a" style="left:270.3px;top:112.5px;" width="6.4" height="4.2" viewBox="0 0 6.4 4.2"><path d="M1 1 L3.2 3.2 L5.4 1" fill="none" stroke="#333" stroke-width="1.05" stroke-linecap="round" stroke-linejoin="round"/></svg>
<svg class="a" style="left:298px;top:79px;" width="12" height="12" viewBox="0 0 12 12"><path d="M0.2 2.1 H11.8 M1.8 5.3 H10.2 M0.2 8.6 H11.8 " stroke="#adadad" stroke-width="1.2" fill="none"/></svg>
<svg class="a" style="left:319.5px;top:80px;" width="12" height="12" viewBox="0 0 12 12"><path d="M0.2 3.6 H11.8 M1.8 6.9 H10.2 M0.2 10.2 H11.8 " stroke="#adadad" stroke-width="1.2" fill="none"/></svg>
<svg class="a" style="left:341px;top:81.6px;" width="12" height="12" viewBox="0 0 12 12"><path d="M0.2 5.2 H11.8 M1.8 8.6 H10.2 M0.2 12 H11.8 " stroke="#adadad" stroke-width="1.2" fill="none"/></svg>
<div class="a" style="left:357.5px;top:77px;width:1px;height:20px;background:#e0e0e0;"></div>
<svg class="a" style="left:363.5px;top:79.5px;" width="14" height="13" viewBox="0 0 14 13"><path d="M4.6 12.6 L12.6 4.6 M9 4.2 L13 4.2 L13 8.2" fill="none" stroke="#a8a8a8" stroke-width="1"/></svg>
<div class="a t" style="left:363.5px;top:80.2px;font-size:8px;color:#a6a6a6;transform:rotate(-40deg);transform-origin:0 100%;margin-top:2px;margin-left:2px;">ab</div>
<svg class="a" style="left:381.5px;top:85.75px;" width="6.2" height="4.1" viewBox="0 0 6.2 4.1"><path d="M1 1 L3.1 3.1 L5.2 1" fill="none" stroke="#bdbdbd" stroke-width="1" stroke-linecap="round" stroke-linejoin="round"/></svg>
<div class="a" style="left:405.5px;top:76px;width:1px;height:52px;background:#e0e0e0;"></div>
<div class="a t" style="left:416.6px;top:80.6px;font-size:8.2px;color:#a6a6a6;">ab</div>
<svg class="a" style="left:416.4px;top:88px;" width="12" height="7" viewBox="0 0 12 7"><path d="M2.4 0.8 C0.2 1.2 0.2 4.6 2.6 5 M6 0.8 C3.8 1.2 3.8 4.6 6.2 5" fill="none" stroke="#a8a8a8" stroke-width="0.9"/><path d="M7.4 0.8 H9 C11.4 0.8 11.4 4.6 9 4.6 H7.6 M8.8 3.2 L7.4 4.6 L8.8 6" fill="none" stroke="#a8a8a8" stroke-width="0.9"/></svg>
<div class="a t" style="transform:scaleX(0.9374);top:85.00px;font-size:10.4px;color:#adadad;left:432.00px;transform-origin:0 50%;">Wrap Text</div>
<svg class="a" style="left:298px;top:107px;" width="12" height="12" viewBox="0 0 12 12"><path d="M0.2 1.6 H11.8 M0.2 4.9 H7.6 M0.2 8.2 H11.8 M0.2 11.5 H7.6 " stroke="#adadad" stroke-width="1.2" fill="none"/></svg>
<svg class="a" style="left:319.5px;top:107px;" width="12" height="12" viewBox="0 0 12 12"><path d="M0.2 1.6 H11.8 M2.2 4.9 H9.8 M0.2 8.2 H11.8 M2.2 11.5 H9.8 " stroke="#adadad" stroke-width="1.2" fill="none"/></svg>
<svg class="a" style="left:341px;top:107px;" width="12" height="12" viewBox="0 0 12 12"><path d="M0.2 1.6 H11.8 M4.4 4.9 H11.8 M0.2 8.2 H11.8 M4.4 11.5 H11.8 " stroke="#adadad" stroke-width="1.2" fill="none"/></svg>
<div class="a" style="left:357.5px;top:104.5px;width:1px;height:19px;background:#e0e0e0;"></div>
<svg class="a" style="left:364px;top:107px;" width="12" height="12" viewBox="0 0 12 12"><path d="M0.2 1.6 H11.8 M6.4 4.9 H11.8 M6.4 8.2 H11.8 M0.2 11.5 H11.8 " stroke="#adadad" stroke-width="1.2" fill="none"/><path d="M4.6 6.6 H0.6 M2.2 5 L0.6 6.6 L2.2 8.2" fill="none" stroke="#b4b4b4" stroke-width="0.9"/></svg>
<svg class="a" style="left:385.3px;top:107px;" width="12" height="12" viewBox="0 0 12 12"><path d="M0.2 1.6 H11.8 M6.4 4.9 H11.8 M6.4 8.2 H11.8 M0.2 11.5 H11.8 " stroke="#adadad" stroke-width="1.2" fill="none"/><path d="M0.4 6.6 H4.4 M2.8 5 L4.4 6.6 L2.8 8.2" fill="none" stroke="#b4b4b4" stroke-width="0.9"/></svg>
<svg class="a" style="left:415px;top:107.3px;" width="13" height="12.5" viewBox="0 0 13 12.5"><rect x="0.5" y="0.5" width="11.8" height="11.4" fill="none" stroke="#b0b0b0" stroke-width="1"/><path d="M0.5 3.4 H12.3 M0.5 9 H12.3 M6.4 0.5 V3.4 M6.4 9 V11.9" stroke="#b0b0b0" stroke-width="0.8"/><path d="M2.6 6.2 H10.2 M3.8 5 L2.6 6.2 L3.8 7.4 M9 5 L10.2 6.2 L9 7.4" fill="none" stroke="#b0b0b0" stroke-width="0.8"/></svg>
<div class="a t" style="transform:scaleX(0.9544);top:111.00px;font-size:10.4px;color:#adadad;left:432.00px;transform-origin:0 50%;">Merge &amp; Center</div>
<svg class="a" style="left:511.9px;top:112.55px;" width="6.2" height="4.1" viewBox="0 0 6.2 4.1"><path d="M1 1 L3.1 3.1 L5.2 1" fill="none" stroke="#bdbdbd" stroke-width="1" stroke-linecap="round" stroke-linejoin="round"/></svg>
<div class="a" style="left:536px;top:77.4px;width:120px;height:20px;background:#efefef;border:1px solid #e6e6e6;box-sizing:border-box;border-radius:4px;"></div>
<div class="a t" style="transform:scaleX(0.8656);top:84.00px;font-size:10.4px;color:#b0b0b0;left:539.00px;transform-origin:0 50%;">General</div>
<svg class="a" style="left:647.9px;top:85.75px;" width="6.2" height="4.1" viewBox="0 0 6.2 4.1"><path d="M1 1 L3.1 3.1 L5.2 1" fill="none" stroke="#c4c4c4" stroke-width="1" stroke-linecap="round" stroke-linejoin="round"/></svg>
<div class="a t" style="transform:scaleX(0.8871);top:107.00px;font-size:14.2px;color:#707070;left:542.00px;transform-origin:0 50%;">$</div>
<svg class="a" style="left:558.4px;top:112.55px;" width="6.2" height="4.1" viewBox="0 0 6.2 4.1"><path d="M1 1 L3.1 3.1 L5.2 1" fill="none" stroke="#bdbdbd" stroke-width="1" stroke-linecap="round" stroke-linejoin="round"/></svg>
<div class="a t" style="transform:scaleX(0.9822);top:107.00px;font-size:14.2px;color:#707070;left:573.80px;transform-origin:0 50%;">%</div>
<svg class="a" style="left:597.5px;top:108.5px;" width="8" height="12" viewBox="0 0 8 12"><circle cx="4.2" cy="3.6" r="3" fill="#707070"/><path d="M7.2 3.4 C7.4 7.4 5.4 10 2 11.2 L1.6 10.2 C4 9 5 7.6 4.8 5.6 Z" fill="#707070"/></svg>
<div class="a" style="left:612.5px;top:104.5px;width:1px;height:19px;background:#e0e0e0;"></div>
<div class="a t" style="left:626.4px;top:107.2px;font-size:7.9px;color:#9c9c9c;">0</div><div class="a t" style="left:620px;top:113.6px;font-size:7.9px;color:#9c9c9c;letter-spacing:-0.2px;">.00</div>
<svg class="a" style="left:618.4px;top:108px;" width="8" height="6" viewBox="0 0 8 6"><path d="M7.4 2.8 H0.8 M2.8 0.6 L0.6 2.8 L2.8 5" fill="none" stroke="#a4a4a4" stroke-width="0.9"/></svg>
<div class="a t" style="left:641.6px;top:107.2px;font-size:7.9px;color:#9c9c9c;letter-spacing:-0.2px;">.00</div><div class="a t" style="left:646.6px;top:113.6px;font-size:7.9px;color:#9c9c9c;">.0</div>
<svg class="a" style="left:639.4px;top:114.4px;" width="8" height="6" viewBox="0 0 8 6"><path d="M0.4 2.8 H7 M5 0.6 L7.2 2.8 L5 5" fill="none" stroke="#a4a4a4" stroke-width="0.9"/></svg>
<svg class="a" style="left:688px;top:77.3px;" width="24.5" height="19" viewBox="0 0 24.5 19"><rect x="0.6" y="0.6" width="23.2" height="17.6" fill="#fff" stroke="#b2b2b2" stroke-width="1"/><rect x="5.4" y="0.6" width="8" height="5.6" fill="#d4d4d4"/><rect x="5.4" y="6.4" width="5" height="5.8" fill="#d4d4d4"/><rect x="5.4" y="12.4" width="11" height="5.6" fill="#d4d4d4"/><path d="M0.6 6.3 H23.8 M0.6 12.3 H23.8 M5.4 0.6 V18.2 M18 0.6 V18.2" stroke="#b2b2b2" stroke-width="0.9"/></svg>
<div class="a t" style="transform:scaleX(0.9808);top:105.00px;font-size:10.4px;color:#adadad;left:674.00px;transform-origin:0 50%;">Conditional</div>
<div class="a t" style="transform:scaleX(0.9663);top:118.00px;font-size:10.4px;color:#adadad;left:671.00px;transform-origin:0 50%;">Formatting</div>
<svg class="a" style="left:721.9px;top:119.35000000000001px;" width="6.2" height="4.1" viewBox="0 0 6.2 4.1"><path d="M1 1 L3.1 3.1 L5.2 1" fill="none" stroke="#bdbdbd" stroke-width="1" stroke-linecap="round" stroke-linejoin="round"/></svg>
<svg class="a" style="left:743px;top:77.3px;" width="26" height="22" viewBox="0 0 26 22"><rect x="0.6" y="0.6" width="23" height="17.4" fill="#fff" stroke="#b2b2b2" stroke-width="1"/><rect x="8.4" y="6.4" width="8" height="5.8" fill="#d4d4d4"/><path d="M0.6 6.3 H23.6 M0.6 12.3 H23.6 M8.3 0.6 V18 M16.2 0.6 V18" stroke="#b2b2b2" stroke-width="0.9"/><path d="M25.6 6 C21.6 8.6 17.6 12.6 15.4 15.6 L18 17.8 C21 14.6 24.4 10.4 25.6 6 Z" fill="#eeeeee" stroke="#b2b2b2" stroke-width="1" stroke-linejoin="round"/><path d="M15.2 15.8 C12 15.6 12.6 19 9.8 20.4 C13.6 21.6 17.6 20.6 18 17.8 Z" fill="#cfcfcf" stroke="#b2b2b2" stroke-width="1" stroke-linejoin="round"/></svg>
<div class="a t" style="transform:scaleX(0.9192);top:105.00px;font-size:10.4px;color:#adadad;left:733.00px;transform-origin:0 50%;">Format as</div>
<div class="a t" style="transform:scaleX(0.8855);top:118.00px;font-size:10.4px;color:#adadad;left:739.00px;transform-origin:0 50%;">Table</div>
<svg class="a" style="left:764.4px;top:119.35000000000001px;" width="6.2" height="4.1" viewBox="0 0 6.2 4.1"><path d="M1 1 L3.1 3.1 L5.2 1" fill="none" stroke="#bdbdbd" stroke-width="1" stroke-linecap="round" stroke-linejoin="round"/></svg>
<svg class="a" style="left:787px;top:77.3px;" width="26" height="22" viewBox="0 0 26 22"><rect x="0.6" y="0.6" width="23" height="17.4" fill="#fff" stroke="#b2b2b2" stroke-width="1"/><rect x="5" y="5.6" width="13" height="8" fill="#d4d4d4"/><path d="M0.6 5.5 H23.6 M5 0.6 V18 M0.6 13.6 H5" stroke="#b2b2b2" stroke-width="0.9"/><path d="M25.6 6 C21.6 8.6 17.6 12.6 15.4 15.6 L18 17.8 C21 14.6 24.4 10.4 25.6 6 Z" fill="#eeeeee" stroke="#b2b2b2" stroke-width="1" stroke-linejoin="round"/><path d="M15.2 15.8 C12 15.6 12.6 19 9.8 20.4 C13.6 21.6 17.6 20.6 18 17.8 Z" fill="#cfcfcf" stroke="#b2b2b2" stroke-width="1" stroke-linejoin="round"/></svg>
<div class="a t" style="transform:scaleX(0.8935);top:105.00px;font-size:10.4px;color:#adadad;left:791.00px;transform-origin:0 50%;">Cell</div>
<div class="a t" style="transform:scaleX(0.8835);top:118.00px;font-size:10.4px;color:#adadad;left:781.00px;transform-origin:0 50%;">Styles</div>
<svg class="a" style="left:809.4px;top:119.35000000000001px;" width="6.2" height="4.1" viewBox="0 0 6.2 4.1"><path d="M1 1 L3.1 3.1 L5.2 1" fill="none" stroke="#bdbdbd" stroke-width="1" stroke-linecap="round" stroke-linejoin="round"/></svg>
<svg class="a" style="left:835px;top:77px;" width="28" height="19" viewBox="0 0 28 19"><rect x="2" y="0.7" width="23.4" height="17.8" fill="#f6f6f6" stroke="#a3a3a3" stroke-width="1.1"/><path d="M2 6.2 H25.4 M2 12.9 H25.4 M9.8 0.7 V18.5 M17.6 0.7 V18.5" stroke="#a3a3a3" stroke-width="1"/><path d="M9.2 6.2 H25.4 V12.9 H9.2 Z" fill="#cdcdcd" stroke="#a3a3a3" stroke-width="0.9"/><rect x="19.6" y="6.6" width="5.6" height="5.9" fill="#b4b4b4"/><path d="M9.2 7.6 H5.6 V5.4 L0.7 9.55 L5.6 13.7 V11.5 H9.2 Z" fill="#fff" stroke="#a3a3a3" stroke-width="0.9" stroke-linejoin="round"/></svg>
<div class="a t" style="transform:scaleX(0.8846);top:106.00px;font-size:10.4px;color:#2b2b2b;left:837.00px;transform-origin:0 50%;">Insert</div>
<svg class="a" style="left:844.8px;top:120.2px;" width="6.4" height="4.2" viewBox="0 0 6.4 4.2"><path d="M1 1 L3.2 3.2 L5.4 1" fill="none" stroke="#333" stroke-width="1.05" stroke-linecap="round" stroke-linejoin="round"/></svg>
<svg class="a" style="left:870.9px;top:77px;" width="28" height="19" viewBox="0 0 28 19"><rect x="2" y="0.7" width="23.4" height="17.8" fill="#f6f6f6" stroke="#a3a3a3" stroke-width="1.1"/><path d="M2 6.2 H25.4 M2 12.9 H25.4 M9.8 0.7 V18.5 M17.6 0.7 V18.5" stroke="#a3a3a3" stroke-width="1"/><path d="M2 6.2 H14.6 L18.2 9.55 L14.6 12.9 H2 Z" fill="#d2d2d2" stroke="#a3a3a3" stroke-width="0.9"/><rect x="5.6" y="6.8" width="5.4" height="5.5" fill="#b4b4b4"/><rect x="17.8" y="4.4" width="9" height="10.4" fill="#fff" opacity="0.75"/><path d="M17.6 4.6 L26.4 14.6 M26.4 4.6 L17.6 14.6" stroke="#c4c4c4" stroke-width="1.3"/></svg>
<div class="a t" style="transform:scaleX(0.9319);top:106.00px;font-size:10.4px;color:#2b2b2b;left:871.00px;transform-origin:0 50%;">Delete</div>
<svg class="a" style="left:881.0999999999999px;top:120.2px;" width="6.4" height="4.2" viewBox="0 0 6.4 4.2"><path d="M1 1 L3.2 3.2 L5.4 1" fill="none" stroke="#333" stroke-width="1.05" stroke-linecap="round" stroke-linejoin="round"/></svg>
<svg class="a" style="left:909px;top:73.5px;" width="24" height="23" viewBox="0 0 24 23"><path d="M5.2 1.2 H18.4 M5.2 -0.2 V2.6 M18.4 -0.2 V2.6" stroke="#2b7cd3" stroke-width="0.9" fill="none"/><rect x="0.6" y="4.2" width="22.8" height="17.6" fill="#fff" stroke="#4a4a4a" stroke-width="1.2"/><rect x="6" y="10.2" width="11.6" height="5.8" fill="#4fa3f0"/><path d="M0.6 10.1 H23.4 M0.6 16 H23.4 M6 4.2 V21.8 M17.6 4.2 V21.8" stroke="#4a4a4a" stroke-width="1"/></svg>
<div class="a t" style="transform:scaleX(0.9416);top:105.00px;font-size:10.4px;color:#2b2b2b;left:905.00px;transform-origin:0 50%;">Format</div>
<svg class="a" style="left:917.4px;top:119.2px;" width="6.4" height="4.2" viewBox="0 0 6.4 4.2"><path d="M1 1 L3.2 3.2 L5.4 1" fill="none" stroke="#333" stroke-width="1.05" stroke-linecap="round" stroke-linejoin="round"/></svg>
<svg class="a" style="left:956px;top:75px;" width="11" height="12" viewBox="0 0 11 12"><path d="M9.8 2.6 V0.7 H0.9 L5.6 6 L0.9 11.3 H9.8 V9.4" fill="none" stroke="#a6a6a6" stroke-width="1.1" stroke-linejoin="round"/></svg>
<div class="a t" style="transform:scaleX(0.9240);top:77.00px;font-size:10.4px;color:#adadad;left:972.00px;transform-origin:0 50%;">AutoSum</div>
<svg class="a" style="left:1021.9px;top:79.55px;" width="6.2" height="4.1" viewBox="0 0 6.2 4.1"><path d="M1 1 L3.1 3.1 L5.2 1" fill="none" stroke="#bdbdbd" stroke-width="1" stroke-linecap="round" stroke-linejoin="round"/></svg>
<svg class="a" style="left:955px;top:96px;" width="13" height="12" viewBox="0 0 13 12"><rect x="0.5" y="0.5" width="11.8" height="10.6" fill="#f3f3f3" stroke="#a8a8a8" stroke-width="1"/><path d="M6.4 2.6 V8.2 M4 6 L6.4 8.4 L8.8 6" fill="none" stroke="#a8a8a8" stroke-width="0.9"/></svg>
<div class="a t" style="transform:scaleX(0.9035);top:99.00px;font-size:10.4px;color:#adadad;left:972.00px;transform-origin:0 50%;">Fill</div>
<svg class="a" style="left:986.9px;top:100.75px;" width="6.2" height="4.1" viewBox="0 0 6.2 4.1"><path d="M1 1 L3.1 3.1 L5.2 1" fill="none" stroke="#bdbdbd" stroke-width="1" stroke-linecap="round" stroke-linejoin="round"/></svg>
<svg class="a" style="left:955px;top:117px;" width="13.5" height="13" viewBox="0 0 13.5 13"><path d="M8.6 0.8 L12.6 4.8 L5.6 11.8 L1.2 7.6 Z" fill="#fff" stroke="#b13fbf" stroke-width="1.1" stroke-linejoin="round"/><path d="M4.6 4.6 L8.8 8.8 L5.6 11.8 L1.2 7.6 Z" fill="#d98be2" stroke="#b13fbf" stroke-width="1.1" stroke-linejoin="round"/></svg>
<div class="a t" style="transform:scaleX(0.9258);top:120.00px;font-size:10.4px;color:#2b2b2b;left:971.00px;transform-origin:0 50%;">Clear</div>
<svg class="a" style="left:996.8px;top:121.9px;" width="6.4" height="4.2" viewBox="0 0 6.4 4.2"><path d="M1 1 L3.2 3.2 L5.4 1" fill="none" stroke="#333" stroke-width="1.05" stroke-linecap="round" stroke-linejoin="round"/></svg>
<div class="a t" style="transform:scaleX(0.9279);top:75.00px;font-size:12.6px;color:#a0a0a0;left:1039.80px;transform-origin:0 50%;">A</div>
<div class="a t" style="transform:scaleX(0.9087);top:88.00px;font-size:12.6px;color:#a0a0a0;left:1040.20px;transform-origin:0 50%;">Z</div>
<svg class="a" style="left:1049.5px;top:80.2px;" width="14" height="15" viewBox="0 0 14 15"><path d="M0.8 0.9 H13 V2 L8.4 7.4 V13.4 H5.4 V7.4 L0.8 2 Z" fill="#f4f4f4" stroke="#a6a6a6" stroke-width="1.1" stroke-linejoin="round"/></svg>
<div class="a t" style="transform:scaleX(0.9524);top:105.00px;font-size:10.4px;color:#adadad;left:1037.00px;transform-origin:0 50%;">Sort &amp;</div>
<div class="a t" style="transform:scaleX(0.9310);top:118.00px;font-size:10.4px;color:#adadad;left:1036.00px;transform-origin:0 50%;">Filter</div>
<svg class="a" style="left:1059.4px;top:119.35000000000001px;" width="6.2" height="4.1" viewBox="0 0 6.2 4.1"><path d="M1 1 L3.1 3.1 L5.2 1" fill="none" stroke="#bdbdbd" stroke-width="1" stroke-linecap="round" stroke-linejoin="round"/></svg>
<svg class="a" style="left:1077px;top:74.5px;" width="25" height="25" viewBox="0 0 25 25"><circle cx="15.2" cy="9" r="8.2" fill="none" stroke="#444" stroke-width="1.1"/><path d="M9.6 15 L0.8 24" stroke="#444" stroke-width="1.2"/></svg>
<div class="a t" style="transform:scaleX(0.9657);top:105.00px;font-size:10.4px;color:#2b2b2b;left:1075.00px;transform-origin:0 50%;">Find &amp;</div>
<div class="a t" style="transform:scaleX(0.8999);top:118.00px;font-size:10.4px;color:#2b2b2b;left:1072.00px;transform-origin:0 50%;">Select</div>
<svg class="a" style="left:1100.0px;top:119.30000000000001px;" width="6.4" height="4.2" viewBox="0 0 6.4 4.2"><path d="M1 1 L3.2 3.2 L5.4 1" fill="none" stroke="#333" stroke-width="1.05" stroke-linecap="round" stroke-linejoin="round"/></svg>
<svg class="a" style="left:1129px;top:74.6px;" width="24.5" height="24.5" viewBox="0 0 24.5 24.5"><rect x="0.8" y="0.8" width="22.8" height="22.8" fill="#fff" stroke="#b4b4b4" stroke-width="1.2"/><rect x="3.4" y="3.4" width="7.4" height="7.4" fill="none" stroke="#b4b4b4" stroke-width="1"/><rect x="3.4" y="13.2" width="7.4" height="7.4" fill="none" stroke="#b4b4b4" stroke-width="1"/><rect x="13.2" y="3.4" width="7.4" height="7.4" fill="none" stroke="#b4b4b4" stroke-width="1"/><rect x="13.2" y="13.2" width="7.4" height="7.4" fill="none" stroke="#b4b4b4" stroke-width="1"/></svg>
<div class="a t" style="transform:scaleX(0.9933);top:104.00px;font-size:10.4px;color:#adadad;left:1124.00px;transform-origin:0 50%;">Add-ins</div>
<svg class="a" style="left:1179px;top:73.5px;" width="27.5" height="27" viewBox="0 0 27.5 27"><rect x="0.6" y="0.6" width="25.6" height="24.8" fill="#fff" stroke="#b4b4b4" stroke-width="1"/><rect x="0.6" y="0.6" width="25.6" height="4" fill="#d9d9d9"/><path d="M0.6 4.6 H26.2 M0.6 11.4 H26.2 M0.6 18.4 H26.2 M9 18.4 V25.4 M17.6 18.4 V25.4" stroke="#d0d0d0" stroke-width="0.9"/><circle cx="12.6" cy="11.4" r="8" fill="#fff" stroke="#a8a8a8" stroke-width="1.1"/><rect x="8.2" y="10.6" width="2.2" height="4" fill="#c4c4c4"/><rect x="11.2" y="7.4" width="2.4" height="7.2" fill="#c4c4c4"/><rect x="14.4" y="9.4" width="2.2" height="5.2" fill="#c4c4c4"/><path d="M18.4 17.4 L26.4 25.6" stroke="#a8a8a8" stroke-width="1.3"/></svg>
<div class="a t" style="transform:scaleX(0.9197);top:104.00px;font-size:10.4px;color:#adadad;left:1175.70px;transform-origin:0 50%;">Analyze</div>
<div class="a t" style="transform:scaleX(0.9566);top:118.00px;font-size:10.4px;color:#adadad;left:1182.00px;transform-origin:0 50%;">Data</div>
<svg class="a" style="left:1256.25px;top:136.5px;" width="9.5" height="5.6" viewBox="0 0 9.5 5.6"><path d="M1 1 L4.75 4.6 L8.5 1" fill="none" stroke="#333" stroke-width="1.1" stroke-linecap="round" stroke-linejoin="round"/></svg>
<div class="a t" style="transform:scaleX(0.9140);top:160.00px;font-size:10.6px;color:#2b2b2b;left:13.00px;transform-origin:0 50%;">AutoSave</div>
<div class="a" style="left:60.6px;top:156px;width:36.4px;height:16.8px;background:#fff;border:1px solid #555;box-sizing:border-box;border-radius:8.4px;"></div>
<div class="a" style="left:63.4px;top:159px;width:11.4px;height:11.4px;background:#555;border-radius:6px;"></div>
<div class="a t" style="transform:scaleX(0.8554);top:160.00px;font-size:9.6px;color:#444;left:80.00px;transform-origin:0 50%;">Off</div>
<svg class="a" style="left:107px;top:159.2px;" width="14.5" height="13.6" viewBox="0 0 14.5 13.6"><path d="M0.7 0.7 H11.6 L13.8 2.8 V12.9 H0.7 Z" fill="#cf6fd8" stroke="#b144bd" stroke-width="1" stroke-linejoin="round"/><rect x="3.4" y="0.9" width="7" height="4.6" fill="#fff"/><rect x="3.4" y="8" width="7.6" height="4.8" fill="#fff"/><rect x="5.2" y="9.8" width="4" height="3" fill="#cf6fd8"/></svg>
<div class="a t" style="transform:scaleX(0.8279);top:160.00px;font-size:10.6px;color:#2b2b2b;left:124.00px;transform-origin:0 50%;">Save</div>
<div class="a" style="left:154px;top:153px;width:22.5px;height:24px;background:#d6d6d6;border-radius:4px;"></div>
<svg class="a" style="left:158.5px;top:158.5px;" width="14" height="13" viewBox="0 0 14 13"><path d="M3.4 4.4 L5.4 1 H10.4 L13 5.4 L10.4 9.8 H7.4" fill="none" stroke="#bababa" stroke-width="1"/><circle cx="4" cy="8.8" r="2.5" fill="#d6d6d6" stroke="#bababa" stroke-width="1"/></svg>
<svg class="a" style="left:183px;top:158px;" width="13" height="14" viewBox="0 0 13 14"><path d="M1.4 1.2 V6 H6.2" fill="none" stroke="#333" stroke-width="1.1"/><path d="M1.6 5.8 C4.6 0.6 12.2 2.4 11.8 7.2 C11.4 10.4 7.6 12.4 4.4 14.8" fill="none" stroke="#333" stroke-width="1.15"/></svg>
<div class="a t" style="transform:scaleX(0.9476);top:160.00px;font-size:10.6px;color:#2b2b2b;left:199.00px;transform-origin:0 50%;">Undo</div>
<svg class="a" style="left:231.10000000000002px;top:162.9px;" width="6.4" height="4.2" viewBox="0 0 6.4 4.2"><path d="M1 1 L3.2 3.2 L5.4 1" fill="none" stroke="#333" stroke-width="1.05" stroke-linecap="round" stroke-linejoin="round"/></svg>
<svg class="a" style="left:246.5px;top:158px;" width="13" height="14" viewBox="0 0 13 14"><path d="M11.6 1.2 V6 H6.8" fill="none" stroke="#bdbdbd" stroke-width="1.1"/><path d="M11.4 5.8 C8.4 0.6 0.8 2.4 1.2 7.2 C1.6 10.4 5.4 12.4 8.6 14.8" fill="none" stroke="#bdbdbd" stroke-width="1.15"/></svg>
<div class="a t" style="transform:scaleX(0.8883);top:160.00px;font-size:10.6px;color:#b4b4b4;left:262.50px;transform-origin:0 50%;">Redo</div>
<svg class="a" style="left:293.9px;top:162.95px;" width="6.2" height="4.1" viewBox="0 0 6.2 4.1"><path d="M1 1 L3.1 3.1 L5.2 1" fill="none" stroke="#c4c4c4" stroke-width="1" stroke-linecap="round" stroke-linejoin="round"/></svg>
<svg class="a" style="left:311.5px;top:161px;" width="7" height="8" viewBox="0 0 7 8"><path d="M0.8 1 H6.2" stroke="#333" stroke-width="1"/><path d="M0.8 3.6 L3.5 6.4 L6.2 3.6" fill="none" stroke="#333" stroke-width="1.1"/></svg>
<div class="a" style="left:29.099999999999998px;top:278.8px;width:32.4px;height:32.4px;background:#1e7145;border-radius:17px;"></div>
<div class="a t" style="transform:translateX(-50%);top:286.16px;font-size:18px;color:#fff;left:45.30px;transform-origin:50% 50%;">1</div>
<div class="a" style="left:193.20000000000002px;top:278.8px;width:32.4px;height:32.4px;background:#1e7145;border-radius:17px;"></div>
<div class="a t" style="transform:translateX(-50%);top:286.16px;font-size:18px;color:#fff;left:209.40px;transform-origin:50% 50%;">2</div>
<div class="a" style="left:359.40000000000003px;top:278.8px;width:32.4px;height:32.4px;background:#1e7145;border-radius:17px;"></div>
<div class="a t" style="transform:translateX(-50%);top:286.16px;font-size:18px;color:#fff;left:375.60px;transform-origin:50% 50%;">3</div>
<div class="a" style="left:524.0px;top:278.8px;width:32.4px;height:32.4px;background:#1e7145;border-radius:17px;"></div>
<div class="a t" style="transform:translateX(-50%);top:286.16px;font-size:18px;color:#fff;left:540.20px;transform-origin:50% 50%;">4</div>
<div class="a t" style="transform:scaleX(0.9869);top:285.00px;font-size:11.3px;color:#383838;left:71.60px;transform-origin:0 50%;">The chart below has</div>
<div class="a t" style="transform:scaleX(0.9669);top:300.00px;font-size:11.3px;color:#383838;left:71.60px;transform-origin:0 50%;">two data series: <b>Sales</b></div>
<div class="a t" style="transform:scaleX(0.9705);top:315.00px;font-size:11.3px;color:#383838;left:71.60px;transform-origin:0 50%;">and <b>Profit %</b>. But we</div>
<div class="a t" style="transform:scaleX(0.9714);top:330.00px;font-size:11.3px;color:#383838;left:71.60px;transform-origin:0 50%;">need <b>Profit %</b> to be</div>
<div class="a t" style="transform:scaleX(0.9953);top:345.00px;font-size:11.3px;color:#383838;left:71.60px;transform-origin:0 50%;">represented by a</div>
<div class="a t" style="transform:scaleX(1.0205);top:360.00px;font-size:11.3px;color:#383838;left:71.60px;transform-origin:0 50%;">horizontal line on the</div>
<div class="a t" style="transform:scaleX(1.0119);top:375.00px;font-size:11.3px;color:#383838;left:71.60px;transform-origin:0 50%;">chart, not a column.</div>
<div class="a t" style="transform:scaleX(1.0082);top:285.00px;font-size:11.3px;color:#000;left:231.40px;transform-origin:0 50%;">Select the chart below,</div>
<div class="a t" style="transform:scaleX(0.9728);top:300.00px;font-size:11.3px;color:#000;left:231.40px;transform-origin:0 50%;">and then on the <b>Design</b></div>
<div class="a t" style="transform:scaleX(0.9458);top:315.00px;font-size:11.3px;color:#000;left:231.40px;transform-origin:0 50%;">tab, click <b>Change Chart</b></div>
<div class="a t" style="transform:scaleX(0.9477);top:330.00px;font-size:11.3px;color:#000;left:231.40px;transform-origin:0 50%;"><b>Type</b>. Then click <b>Combo</b></div>
<div class="a t" style="transform:scaleX(1.0357);top:345.00px;font-size:11.3px;color:#000;left:231.40px;transform-origin:0 50%;">in the lower-left.</div>
<div class="a t" style="transform:scaleX(0.9921);top:285.00px;font-size:11.3px;color:#383838;left:400.00px;transform-origin:0 50%;">On the right, make</div>
<div class="a t" style="transform:scaleX(0.9884);top:300.00px;font-size:11.3px;color:#383838;left:400.00px;transform-origin:0 50%;">sure the Chart Type for</div>
<div class="a t" style="transform:scaleX(0.9560);top:315.00px;font-size:11.3px;color:#383838;left:400.00px;transform-origin:0 50%;">Profit % is set to <b>Line</b>,</div>
<div class="a t" style="transform:scaleX(0.9431);top:330.00px;font-size:11.3px;color:#383838;left:400.00px;transform-origin:0 50%;">and the <b>Secondary</b></div>
<div class="a t" style="transform:scaleX(0.9324);top:345.00px;font-size:11.3px;color:#383838;left:400.00px;transform-origin:0 50%;"><b>Axis</b> checkbox</div>
<div class="a t" style="transform:scaleX(0.9675);top:360.00px;font-size:11.3px;color:#383838;left:400.00px;transform-origin:0 50%;">selected.</div>
<div class="a t" style="transform:scaleX(0.9543);top:285.00px;font-size:11.3px;color:#383838;left:566.25px;transform-origin:0 50%;">Click <b>OK</b>, and the Profit %</div>
<div class="a t" style="transform:scaleX(1.0203);top:300.00px;font-size:11.3px;color:#383838;left:566.25px;transform-origin:0 50%;">will be plotted with a line.</div>
<div class="a t" style="transform:scaleX(0.9886);top:315.00px;font-size:11.3px;color:#383838;left:566.25px;transform-origin:0 50%;">Now you can compare the</div>
<div class="a t" style="transform:scaleX(0.9731);top:330.00px;font-size:11.3px;color:#383838;left:566.25px;transform-origin:0 50%;">two series. For example,</div>
<div class="a t" style="transform:scaleX(0.9952);top:345.00px;font-size:11.3px;color:#383838;left:566.25px;transform-origin:0 50%;">sales were low on 1/3, but</div>
<div class="a t" style="transform:scaleX(1.0221);top:360.00px;font-size:11.3px;color:#383838;left:566.25px;transform-origin:0 50%;">profit was great!</div>
<svg class="a" style="left:749px;top:275.6px;" width="25" height="22" viewBox="0 0 25 22"><g transform="scale(1.04,0.88)"><path d="M4.6 12.6 C0.6 12.8 0.2 7.6 4 7 C3.6 3.4 8 2 10 4.2 C11.6 0.6 17.2 0.8 17.8 4.6 C21.2 3.6 23.6 7 21.6 9.6 C23.8 12 21.4 15.2 18.4 14.2 C17.4 16.8 13.2 17 12 15 C10 17.2 5.6 16.2 4.6 12.6 Z" fill="#f3a974"/></g><circle cx="17" cy="16.6" r="1.5" fill="#f3a974"/><circle cx="21" cy="19.4" r="0.8" fill="#f3a974"/></svg>
<div class="a t" style="transform:scaleX(0.8915);top:277.00px;font-size:11.8px;color:#f2a674;left:777.30px;transform-origin:0 50%;">WHY USE A SECONDARY AXIS?</div>
<div class="a t" style="transform:scaleX(1.0602);top:293.00px;font-size:10.9px;color:#000;-webkit-text-stroke:0.12px #000;left:777.30px;transform-origin:0 50%;">When two columns contain different</div>
<div class="a t" style="transform:scaleX(1.0348);top:308.00px;font-size:10.9px;color:#000;-webkit-text-stroke:0.12px #000;left:777.30px;transform-origin:0 50%;">types of numbers, you'll want to use a</div>
<div class="a t" style="transform:scaleX(1.0125);top:323.00px;font-size:10.9px;color:#000;-webkit-text-stroke:0.12px #000;left:777.30px;transform-origin:0 50%;">secondary axis. In this example, the</div>
<div class="a t" style="transform:scaleX(1.0139);top:338.00px;font-size:10.9px;color:#000;-webkit-text-stroke:0.12px #000;left:777.30px;transform-origin:0 50%;"><b>Sales</b> column contains dollar amounts.</div>
<div class="a t" style="transform:scaleX(1.0178);top:353.00px;font-size:10.9px;color:#000;-webkit-text-stroke:0.12px #000;left:777.30px;transform-origin:0 50%;">But the <b>Profit %</b> column contains</div>
<div class="a t" style="transform:scaleX(1.0169);top:368.00px;font-size:10.9px;color:#000;-webkit-text-stroke:0.12px #000;left:777.30px;transform-origin:0 50%;">percentages. Because the two columns</div>
<div class="a t" style="transform:scaleX(1.0298);top:383.00px;font-size:10.9px;color:#000;-webkit-text-stroke:0.12px #000;left:777.30px;transform-origin:0 50%;">of data are so different, using a combo</div>
<div class="a t" style="transform:scaleX(1.0196);top:398.00px;font-size:10.9px;color:#000;-webkit-text-stroke:0.12px #000;left:777.30px;transform-origin:0 50%;">chart with a secondary axis lets you</div>
<div class="a t" style="transform:scaleX(1.0638);top:413.00px;font-size:10.9px;color:#000;-webkit-text-stroke:0.12px #000;left:777.30px;transform-origin:0 50%;">compare the two columns with different</div>
<div class="a t" style="transform:scaleX(1.0107);top:427.00px;font-size:10.9px;color:#000;-webkit-text-stroke:0.12px #000;left:777.30px;transform-origin:0 50%;">chart elements: columns for <b>Sales</b>, and a</div>
<div class="a t" style="transform:scaleX(1.0099);top:442.00px;font-size:10.9px;color:#000;-webkit-text-stroke:0.12px #000;left:777.30px;transform-origin:0 50%;">line for <b>Profit %</b>.</div>
<div class="a" style="left:455.5px;top:411px;width:66.5px;height:15.5px;background:#4472c4;"></div>
<div class="a" style="left:522px;top:411px;width:129px;height:15.5px;background:#fff;"></div>
<div class="a" style="left:523.6px;top:412.2px;width:126px;height:13.2px;background:#4a6fc0;"></div>
<div class="a" style="left:455.5px;top:426.5px;width:195.5px;height:16.25px;background:#cfd6ea;"></div>
<div class="a" style="left:455.5px;top:426.1px;width:195.5px;height:0.8px;background:#f6f7fb;"></div>
<div class="a" style="left:455.5px;top:442.75px;width:195.5px;height:15.850000000000023px;background:#e9ecf5;"></div>
<div class="a" style="left:455.5px;top:442.35px;width:195.5px;height:0.8px;background:#f6f7fb;"></div>
<div class="a" style="left:455.5px;top:458.6px;width:195.5px;height:16.0px;background:#cfd6ea;"></div>
<div class="a" style="left:455.5px;top:458.20000000000005px;width:195.5px;height:0.8px;background:#f6f7fb;"></div>
<div class="a" style="left:455.5px;top:474.6px;width:195.5px;height:16.399999999999977px;background:#e9ecf5;"></div>
<div class="a" style="left:455.5px;top:474.20000000000005px;width:195.5px;height:0.8px;background:#f6f7fb;"></div>
<div class="a" style="left:455.5px;top:491px;width:195.5px;height:15.899999999999977px;background:#cfd6ea;"></div>
<div class="a" style="left:455.5px;top:490.6px;width:195.5px;height:0.8px;background:#f6f7fb;"></div>
<div class="a" style="left:455.5px;top:506.9px;width:195.5px;height:15.899999999999977px;background:#e9ecf5;"></div>
<div class="a" style="left:455.5px;top:506.5px;width:195.5px;height:0.8px;background:#f6f7fb;"></div>
<div class="a" style="left:522px;top:426.5px;width:129px;height:96.3px;background:rgba(120,150,230,0.10);"></div>
<div class="a t" style="transform:scaleX(0.9826);top:414.00px;font-size:10.8px;color:#fff;font-weight:bold;left:477.50px;transform-origin:0 50%;">Date</div>
<div class="a t" style="transform:scaleX(0.8859);top:414.00px;font-size:10.8px;color:#fff;font-weight:bold;left:556.60px;transform-origin:0 50%;">Sales</div>
<div class="a t" style="transform:scaleX(0.9511);top:414.00px;font-size:10.8px;color:#fff;font-weight:bold;right:631.50px;transform-origin:100% 50%;">Profit %</div>
<div class="a t" style="transform:scaleX(0.9547);top:430.00px;font-size:10.6px;color:#000;right:760.30px;transform-origin:100% 50%;">1-Jan</div>
<div class="a t" style="transform:scaleX(1.0009);top:430.00px;font-size:10.6px;color:#000;right:701.60px;transform-origin:100% 50%;">$900</div>
<div class="a t" style="transform:scaleX(0.9668);top:430.00px;font-size:10.6px;color:#000;right:631.50px;transform-origin:100% 50%;">34%</div>
<div class="a t" style="transform:scaleX(0.9547);top:446.00px;font-size:10.6px;color:#000;right:760.30px;transform-origin:100% 50%;">2-Jan</div>
<div class="a t" style="transform:scaleX(1.0009);top:446.00px;font-size:10.6px;color:#000;right:701.60px;transform-origin:100% 50%;">$600</div>
<div class="a t" style="transform:scaleX(0.9668);top:446.00px;font-size:10.6px;color:#000;right:631.50px;transform-origin:100% 50%;">27%</div>
<div class="a t" style="transform:scaleX(0.9547);top:462.00px;font-size:10.6px;color:#000;right:760.30px;transform-origin:100% 50%;">3-Jan</div>
<div class="a t" style="transform:scaleX(1.0009);top:462.00px;font-size:10.6px;color:#000;right:701.60px;transform-origin:100% 50%;">$500</div>
<div class="a t" style="transform:scaleX(0.9668);top:462.00px;font-size:10.6px;color:#000;right:631.50px;transform-origin:100% 50%;">42%</div>
<div class="a t" style="transform:scaleX(0.9547);top:478.00px;font-size:10.6px;color:#000;right:760.30px;transform-origin:100% 50%;">4-Jan</div>
<div class="a t" style="transform:scaleX(1.0009);top:478.00px;font-size:10.6px;color:#000;right:701.60px;transform-origin:100% 50%;">$900</div>
<div class="a t" style="transform:scaleX(0.9668);top:478.00px;font-size:10.6px;color:#000;right:631.50px;transform-origin:100% 50%;">29%</div>
<div class="a t" style="transform:scaleX(0.9547);top:494.00px;font-size:10.6px;color:#000;right:760.30px;transform-origin:100% 50%;">5-Jan</div>
<div class="a t" style="transform:scaleX(1.0009);top:494.00px;font-size:10.6px;color:#000;right:701.60px;transform-origin:100% 50%;">$700</div>
<div class="a t" style="transform:scaleX(0.9668);top:494.00px;font-size:10.6px;color:#000;right:631.50px;transform-origin:100% 50%;">32%</div>
<div class="a t" style="transform:scaleX(0.9547);top:510.00px;font-size:10.6px;color:#000;right:760.30px;transform-origin:100% 50%;">6-Jan</div>
<div class="a t" style="transform:scaleX(1.0009);top:510.00px;font-size:10.6px;color:#000;right:701.60px;transform-origin:100% 50%;">$800</div>
<div class="a t" style="transform:scaleX(0.9668);top:510.00px;font-size:10.6px;color:#000;right:631.50px;transform-origin:100% 50%;">24%</div>
<div class="a" style="left:454.8px;top:426.3px;width:67.8px;height:97px;border:1.2px solid #8a4fc7;box-sizing:border-box;"></div>
<div class="a" style="left:521.6px;top:426.3px;width:130.4px;height:97px;border:1.2px solid #3f6fd0;box-sizing:border-box;"></div>
<div class="a" style="left:521.6px;top:410.2px;width:130.4px;height:17px;border:1.2px solid #cf4458;box-sizing:border-box;"></div>
<div class="a" style="left:520.6px;top:409.2px;width:3px;height:3px;background:#cf4458;"></div>
<div class="a" style="left:650.2px;top:409.2px;width:3px;height:3px;background:#cf4458;"></div>
<div class="a" style="left:650.2px;top:425.4px;width:3px;height:3px;background:#cf4458;"></div>
<div class="a" style="left:520.6px;top:425.4px;width:3px;height:3px;background:#8a4fc7;"></div>
<div class="a" style="left:453.6px;top:521.8px;width:3px;height:3px;background:#8a4fc7;"></div>
<div class="a" style="left:520.6px;top:521.8px;width:3px;height:3px;background:#8a4fc7;"></div>
<div class="a" style="left:650.2px;top:521.8px;width:3px;height:3px;background:#3f6fd0;"></div>
<svg class="a" style="left:46px;top:549px;" width="112" height="35" viewBox="0 0 112 35"><path d="M17 2.7 H109.6 V32.5 H17 V23.2 H10.2 V27.9 L2.5 17.8 L10.2 7.7 V12.7 H17 Z" fill="#fff" stroke="#1f7650" stroke-width="1.6" stroke-linejoin="miter"/></svg>
<div class="a t" style="transform:scaleX(0.9629);top:562.00px;font-size:13px;color:#1e7145;left:85.00px;transform-origin:0 50%;">Previous</div>
<svg class="a" style="left:583px;top:549px;" width="112" height="35" viewBox="0 0 112 35"><path d="M95 2.7 H2.4 V32.5 H95 V23.2 H101.8 V27.9 L109.5 17.8 L101.8 7.7 V12.7 H95 Z" fill="#fff" stroke="#1f7650" stroke-width="1.6" stroke-linejoin="miter"/></svg>
<div class="a t" style="transform:scaleX(1.0099);top:562.00px;font-size:13px;color:#1e7145;left:618.30px;transform-origin:0 50%;">Next</div>
<div class="a" style="left:69.7px;top:409.4px;width:364px;height:115.4px;background:#fff;border:1px solid #9a9a9a;box-sizing:border-box;"></div>
<div class="a t" style="transform:translateX(-50%) scaleX(0.9593);top:506.00px;font-size:9.6px;color:#595959;left:192.25px;transform-origin:50% 50%;">1/1</div>
<div class="a t" style="transform:translateX(-50%) scaleX(0.9593);top:506.00px;font-size:9.6px;color:#595959;left:233.75px;transform-origin:50% 50%;">1/2</div>
<div class="a t" style="transform:translateX(-50%) scaleX(0.9593);top:506.00px;font-size:9.6px;color:#595959;left:275.25px;transform-origin:50% 50%;">1/3</div>
<div class="a t" style="transform:translateX(-50%) scaleX(0.9593);top:506.00px;font-size:9.6px;color:#595959;left:316.75px;transform-origin:50% 50%;">1/4</div>
<div class="a t" style="transform:translateX(-50%) scaleX(0.9593);top:506.00px;font-size:9.6px;color:#595959;left:358.25px;transform-origin:50% 50%;">1/5</div>
<div class="a t" style="transform:translateX(-50%) scaleX(0.9593);top:506.00px;font-size:9.6px;color:#595959;left:399.75px;transform-origin:50% 50%;">1/6</div>
<svg class="a" style="left:0px;top:0px;" width="1280" height="720" viewBox="0 0 1280 720"><rect x="171.5" y="420.05" width="249.1" height="0.9" fill="#e1e1e1"/><rect x="171.5" y="435.55" width="249.1" height="0.9" fill="#e1e1e1"/><rect x="171.5" y="451.05" width="249.1" height="0.9" fill="#e1e1e1"/><rect x="171.5" y="466.55" width="249.1" height="0.9" fill="#e1e1e1"/><rect x="171.5" y="482.05" width="249.1" height="0.9" fill="#e1e1e1"/><rect x="171.5" y="497.55" width="249.1" height="0.9" fill="#d0d0d0"/><rect x="171.10" y="498" width="0.8" height="2.4" fill="#dcdcdc"/><rect x="212.60" y="498" width="0.8" height="2.4" fill="#dcdcdc"/><rect x="254.10" y="498" width="0.8" height="2.4" fill="#dcdcdc"/><rect x="295.60" y="498" width="0.8" height="2.4" fill="#dcdcdc"/><rect x="337.10" y="498" width="0.8" height="2.4" fill="#dcdcdc"/><rect x="378.60" y="498" width="0.8" height="2.4" fill="#dcdcdc"/><rect x="420.10" y="498" width="0.8" height="2.4" fill="#dcdcdc"/><rect x="182.70" y="428.25" width="9.8" height="69.75" fill="#4472c4"/><rect x="224.20" y="451.50" width="9.8" height="46.50" fill="#4472c4"/><rect x="265.70" y="459.25" width="9.8" height="38.75" fill="#4472c4"/><rect x="307.20" y="428.25" width="9.8" height="69.75" fill="#4472c4"/><rect x="348.70" y="443.75" width="9.8" height="54.25" fill="#4472c4"/><rect x="390.20" y="436.00" width="9.8" height="62.00" fill="#4472c4"/></svg>
<div class="a t" style="transform:scaleX(0.9269);top:416.00px;font-size:9.6px;color:#595959;right:1120.30px;transform-origin:100% 50%;">$1,000</div>
<div class="a t" style="transform:scaleX(0.9230);top:432.00px;font-size:9.6px;color:#595959;right:1120.30px;transform-origin:100% 50%;">$800</div>
<div class="a t" style="transform:scaleX(0.9230);top:447.00px;font-size:9.6px;color:#595959;right:1120.30px;transform-origin:100% 50%;">$600</div>
<div class="a t" style="transform:scaleX(0.9230);top:462.00px;font-size:9.6px;color:#595959;right:1120.30px;transform-origin:100% 50%;">$400</div>
<div class="a t" style="transform:scaleX(0.9230);top:478.00px;font-size:9.6px;color:#595959;right:1120.30px;transform-origin:100% 50%;">$200</div>
<div class="a t" style="transform:scaleX(0.9183);top:494.00px;font-size:9.6px;color:#595959;right:1120.30px;transform-origin:100% 50%;">$0</div>
<div class="a" style="left:81px;top:454.7px;width:4.8px;height:4.8px;background:#4472c4;"></div>
<div class="a t" style="transform:scaleX(0.8458);top:452.00px;font-size:9.6px;color:#595959;left:88.40px;transform-origin:0 50%;">Sales</div>
<div class="a" style="left:81px;top:473.5px;width:4.8px;height:4.8px;background:#ed7d31;"></div>
<div class="a t" style="transform:scaleX(0.9317);top:471.00px;font-size:9.6px;color:#595959;left:88.40px;transform-origin:0 50%;">Profit %</div>
<svg class="a" style="left:0px;top:0px;" width="1280" height="720" viewBox="0 0 1280 720"><circle cx="69.7" cy="409.4" r="3.7" fill="#fff" stroke="#5a5a5a" stroke-width="1.35"/><circle cx="252" cy="409.4" r="3.7" fill="#fff" stroke="#5a5a5a" stroke-width="1.35"/><circle cx="433.7" cy="409.4" r="3.7" fill="#fff" stroke="#5a5a5a" stroke-width="1.35"/><circle cx="69.7" cy="467.2" r="3.7" fill="#fff" stroke="#5a5a5a" stroke-width="1.35"/><circle cx="433.7" cy="467.2" r="3.7" fill="#fff" stroke="#5a5a5a" stroke-width="1.35"/><circle cx="69.7" cy="524.75" r="3.7" fill="#fff" stroke="#5a5a5a" stroke-width="1.35"/><circle cx="252" cy="524.75" r="3.7" fill="#fff" stroke="#5a5a5a" stroke-width="1.35"/><circle cx="433.7" cy="524.75" r="3.7" fill="#fff" stroke="#5a5a5a" stroke-width="1.35"/></svg>
<svg class="a" style="left:441px;top:406px;" width="29" height="29"><rect x="2.60" y="2.70" width="22.60" height="22.10" rx="0" fill="#fff" stroke="#b4b4b4" stroke-width="1"/></svg>
<svg class="a" style="left:441px;top:437px;" width="29" height="29"><rect x="2.60" y="3.20" width="22.60" height="22.10" rx="0" fill="#fff" stroke="#b4b4b4" stroke-width="1"/></svg>
<svg class="a" style="left:441px;top:469px;" width="29" height="29"><rect x="2.60" y="2.80" width="22.60" height="22.10" rx="0" fill="#fff" stroke="#b4b4b4" stroke-width="1"/></svg>
<svg class="a" style="left:447.5px;top:412px;" width="14" height="14.5" viewBox="0 0 14 14.5"><path d="M7 0.4 V14 M0.3 7.2 H13.6" stroke="#55b06a" stroke-width="1.15" fill="none"/></svg>
<svg class="a" style="left:446.5px;top:444.5px;" width="16" height="13" viewBox="0 0 16 13"><path d="M14.2 1.6 C11.6 2.8 8.8 5.2 6.8 7.6 L8.4 9 C10.8 7 13.4 4.2 14.2 1.6 Z" fill="#f4f4f4" stroke="#505050" stroke-width="1" stroke-linejoin="round"/><path d="M6.6 7.6 C4.4 7.4 4.4 10 1.2 11 C4.2 12.2 8 11.6 8.4 9 Z" fill="#3f97e6" stroke="#2f86d8" stroke-width="0.8" stroke-linejoin="round"/></svg>
<svg class="a" style="left:447px;top:476px;" width="15" height="14.5" viewBox="0 0 15 14.5"><path d="M1 1 H14 V2.2 L9.6 7.4 V13.4 H5.6 V7.4 L1 2.2 Z" fill="none" stroke="#595959" stroke-width="1.3" stroke-linejoin="round"/></svg>
<svg class="a" style="left:188px;top:265px;" width="173" height="101"><rect x="3.85" y="3.55" width="164.70" height="92.70" rx="0" fill="none" stroke="#e2000f" stroke-width="2.7"/></svg>
<svg class="a" style="left:61px;top:399px;" width="383" height="135"><rect x="3.35" y="3.45" width="374.40" height="126.30" rx="0" fill="none" stroke="#e2000f" stroke-width="2.7"/></svg>
<svg class="a" style="left:0px;top:0px;pointer-events:none;" width="1280" height="720" viewBox="0 0 1280 720"><path d="M835 547.2 L446.5 467.7" stroke="#e2000f" stroke-width="2.7" fill="none"/><path d="M439.7 466.3 L447.4 463.7 L445.7 471.7 Z" fill="#e2000f"/></svg>
<svg class="a" style="left:831px;top:525px;" width="418" height="46"><rect x="3.65" y="3.95" width="409.90" height="38.10" rx="0" fill="#b4c7e7" stroke="#e2000f" stroke-width="2.7"/></svg>
<div class="a t" style="transform:scaleX(1.0413);top:537.00px;font-size:21.2px;color:#000;-webkit-text-stroke:0.25px #000;left:843.40px;transform-origin:0 50%;">Select the chart below.</div>
</body></html>
